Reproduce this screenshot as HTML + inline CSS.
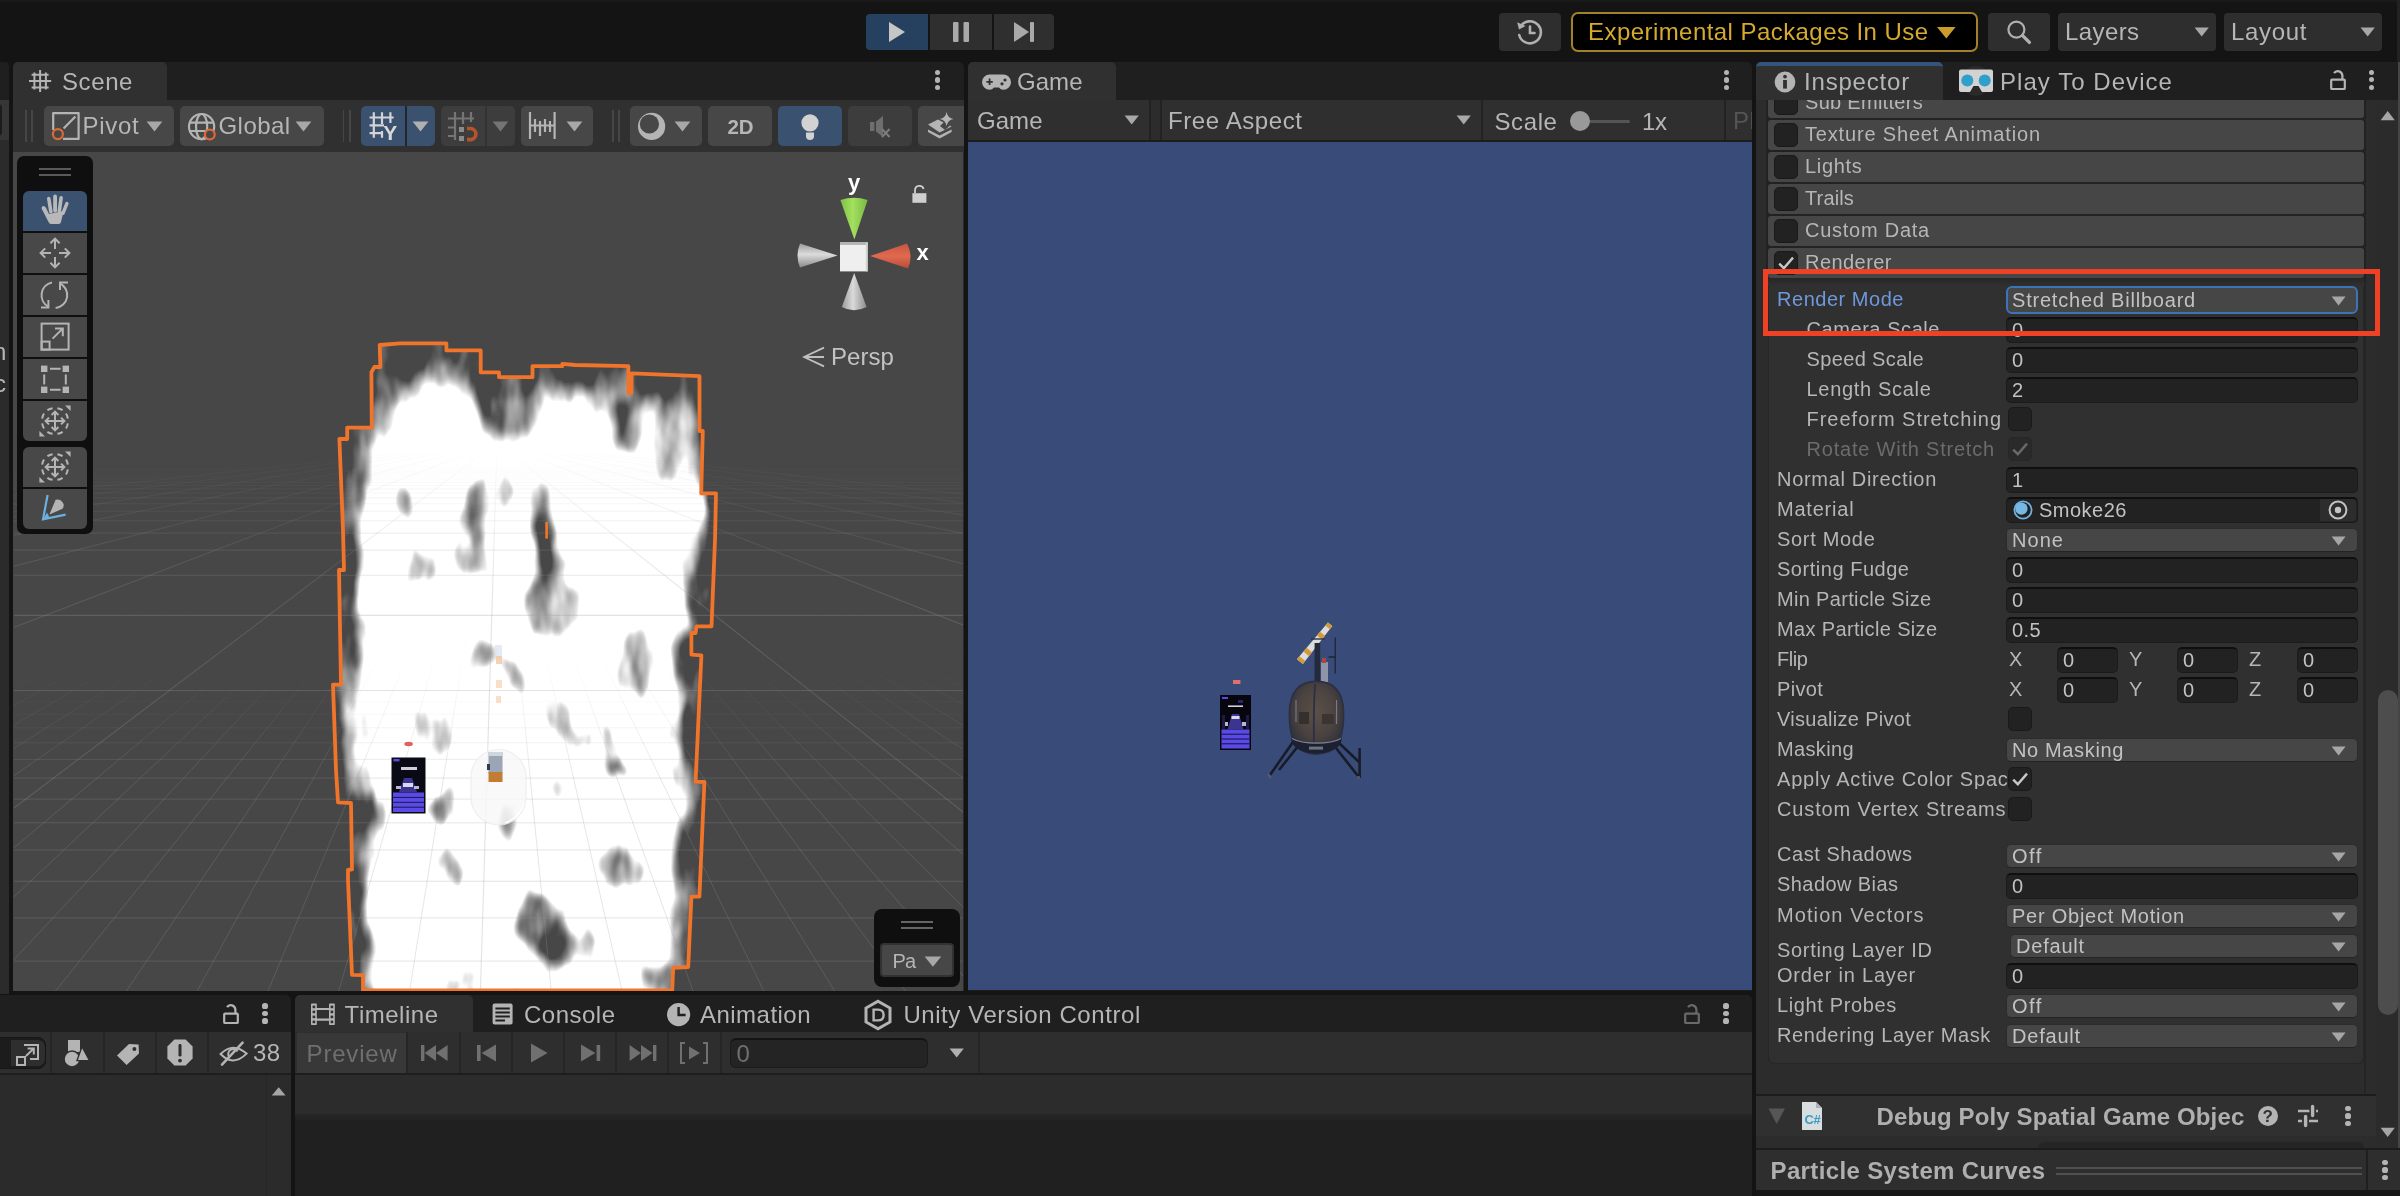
<!DOCTYPE html>
<html><head><meta charset="utf-8"><title>Unity Editor</title>
<style>
html,body{margin:0;padding:0;background:#141414;}
#root{position:relative;width:2400px;height:1196px;overflow:hidden;background:#141414;font-family:"Liberation Sans",sans-serif;}
#root div,#root span,#root svg{position:absolute;box-sizing:border-box;}
#root span{white-space:pre;}
#root{will-change:transform;}
</style></head><body><div id="root">
<div style="left:0px;top:0px;width:2400px;height:62px;background:#141414;"></div>
<div style="left:0px;top:0px;width:2400px;height:3px;background:linear-gradient(#1d1d1d,#141414);"></div>
<div style="left:2397px;top:0px;width:3px;height:62px;background:#222;"></div>
<div style="left:866px;top:14px;width:62px;height:36px;background:#26405f;border-radius:4px 0 0 4px;"></div>
<div style="left:930px;top:14px;width:62px;height:36px;background:#2f2f2f;"></div>
<div style="left:994px;top:14px;width:60px;height:36px;background:#2f2f2f;border-radius:0 4px 4px 0;"></div>
<svg style="left:866px;top:14px;" width="62" height="36" viewBox="0 0 62 36"><path d="M23 8 L39 18 L23 28 Z" fill="#c6c6c6"/></svg>
<svg style="left:930px;top:14px;" width="62" height="36" viewBox="0 0 62 36"><rect x="23" y="8" width="5.5" height="20" rx="1" fill="#a9a9a9"/><rect x="33.5" y="8" width="5.5" height="20" rx="1" fill="#a9a9a9"/></svg>
<svg style="left:994px;top:14px;" width="60" height="36" viewBox="0 0 60 36"><path d="M20 8 L35 18 L20 28 Z" fill="#a9a9a9"/><rect x="36" y="8" width="4" height="20" rx="1" fill="#a9a9a9"/></svg>
<div style="left:1499px;top:13px;width:62px;height:38px;background:#2e2e2e;border-radius:4px;"></div>
<svg style="left:1514px;top:16px;" width="32" height="32" viewBox="0 0 32 32"><g fill="none" stroke="#b0b0b0" stroke-width="2.6" stroke-linecap="round"><path d="M6.5 10.5 A11 11 0 1 1 5.2 19"/><path d="M16 10.5 V17 H20.5"/></g><path d="M3.2 6.2 L5 13.6 L11.6 10 Z" fill="#b0b0b0"/></svg>
<div style="left:1571px;top:12px;width:407px;height:40px;background:#000;border:2px solid #a3812c;border-radius:7px;"></div>
<span id="t0" style="left:1588px;top:20.28px;font-size:24px;line-height:24px;color:#d6a92f;font-weight:400;letter-spacing:0.44px;">Experimental Packages In Use</span>
<svg style="left:1936px;top:26px;" width="22" height="14" viewBox="0 0 22 14"><path d="M1 1 H19.6 L10.3 12.6 Z" fill="#c99c2c"/></svg>
<div style="left:1988px;top:13px;width:62px;height:38px;background:#2e2e2e;border-radius:4px;"></div>
<svg style="left:2004px;top:18px;" width="32" height="30" viewBox="0 0 32 30"><circle cx="12.4" cy="11.6" r="8" fill="none" stroke="#b0b0b0" stroke-width="2.2"/><path d="M18.6 17.6 L25.4 24.4" stroke="#b0b0b0" stroke-width="3.4" stroke-linecap="round"/></svg>
<div style="left:2058px;top:13px;width:158px;height:38px;background:#2e2e2e;border-radius:4px;"></div>
<div style="left:2224px;top:13px;width:158px;height:38px;background:#2e2e2e;border-radius:4px;"></div>
<span id="t1" style="left:2065px;top:20.08px;font-size:24px;line-height:24px;color:#b6b6b6;font-weight:400;letter-spacing:0.41px;">Layers</span>
<span id="t2" style="left:2231px;top:20.08px;font-size:24px;line-height:24px;color:#b6b6b6;font-weight:400;letter-spacing:0.66px;">Layout</span>
<svg style="left:2194px;top:27px;" width="16" height="11" viewBox="0 0 16 11"><path d="M0.6 0.6 H14.8 L7.7 9.6 Z" fill="#a8a8a8"/></svg>
<svg style="left:2360px;top:27px;" width="16" height="11" viewBox="0 0 16 11"><path d="M0.6 0.6 H14.8 L7.7 9.6 Z" fill="#a8a8a8"/></svg>
<div style="left:0px;top:62px;width:8.5px;height:932px;background:#1f1f1f;border-radius:0 4px 0 0;"></div>
<div style="left:0px;top:100px;width:8.5px;height:40px;background:#363636;"></div>
<div style="left:-6px;top:104px;width:8px;height:32px;background:#1c1c1c;border-radius:6px;"></div>
<div style="left:0px;top:140px;width:8.5px;height:854px;background:#2b2b2b;"></div>
<span id="t3" style="left:0px;top:339.68px;font-size:24px;line-height:24px;color:#b6b6b6;font-weight:400;letter-spacing:0.53px;margin-left:-7px;">n</span>
<span id="t4" style="left:0px;top:371.68px;font-size:24px;line-height:24px;color:#b6b6b6;font-weight:400;letter-spacing:0.53px;margin-left:-6px;">c</span>
<div style="left:13px;top:62px;width:951px;height:38px;background:#1f1f1f;border-radius:5px 5px 0 0;"></div>
<div style="left:13px;top:62px;width:154px;height:39px;background:#303030;border-radius:5px 5px 0 0;"></div>
<svg style="left:28px;top:69px;" width="24" height="24" viewBox="0 0 24 24"><g stroke="#b4b4b4" stroke-width="2" fill="none"><path d="M12.1 1 V23 M6.4 3.6 V20.4 M17.9 3.6 V20.4 M1 12 H23.2 M3.6 5.8 H20.6 M3.6 18.6 H20.6"/></g></svg>
<span id="t5" style="left:62px;top:69.88px;font-size:24px;line-height:24px;color:#b6b6b6;font-weight:400;letter-spacing:0.59px;">Scene</span>
<div style="left:934.5px;top:69.9px;width:5.2px;height:5.2px;background:#b4b4b4;border-radius:50%;"></div>
<div style="left:934.5px;top:77.4px;width:5.2px;height:5.2px;background:#b4b4b4;border-radius:50%;"></div>
<div style="left:934.5px;top:84.9px;width:5.2px;height:5.2px;background:#b4b4b4;border-radius:50%;"></div>
<div style="left:13px;top:100px;width:951px;height:52px;background:#303030;"></div>
<div style="left:968px;top:62px;width:784px;height:38px;background:#1f1f1f;border-radius:5px 5px 0 0;"></div>
<div style="left:968px;top:62px;width:148px;height:39px;background:#303030;border-radius:5px 5px 0 0;"></div>
<span id="t6" style="left:1017px;top:69.88px;font-size:24px;line-height:24px;color:#b6b6b6;font-weight:400;letter-spacing:0.04px;">Game</span>
<div style="left:1723.5px;top:69.9px;width:5.2px;height:5.2px;background:#b4b4b4;border-radius:50%;"></div>
<div style="left:1723.5px;top:77.4px;width:5.2px;height:5.2px;background:#b4b4b4;border-radius:50%;"></div>
<div style="left:1723.5px;top:84.9px;width:5.2px;height:5.2px;background:#b4b4b4;border-radius:50%;"></div>
<div style="left:968px;top:100px;width:784px;height:42px;background:#2f2f2f;"></div>
<div style="left:1756px;top:62px;width:644px;height:38px;background:#1f1f1f;border-radius:5px 0 0 0;"></div>
<div style="left:1756px;top:62px;width:187px;height:39px;background:#303030;border-radius:5px 5px 0 0;border-top:4px solid #34547c;"></div>
<span id="t7" style="left:1804px;top:70.08px;font-size:24px;line-height:24px;color:#b6b6b6;font-weight:400;letter-spacing:0.81px;">Inspector</span>
<span id="t8" style="left:2000px;top:70.08px;font-size:24px;line-height:24px;color:#b6b6b6;font-weight:400;letter-spacing:1.05px;">Play To Device</span>
<div style="left:2369.2px;top:69.7px;width:5.2px;height:5.2px;background:#b4b4b4;border-radius:50%;"></div>
<div style="left:2369.2px;top:77.30000000000001px;width:5.2px;height:5.2px;background:#b4b4b4;border-radius:50%;"></div>
<div style="left:2369.2px;top:84.9px;width:5.2px;height:5.2px;background:#b4b4b4;border-radius:50%;"></div>
<div style="left:0px;top:995px;width:291px;height:37px;background:#1f1f1f;border-radius:0 5px 0 0;"></div>
<div style="left:295px;top:995px;width:1457px;height:37px;background:#1f1f1f;border-radius:5px 5px 0 0;"></div>
<div style="left:295px;top:995px;width:178px;height:38px;background:#303030;border-radius:5px 5px 0 0;"></div>
<div style="left:25px;top:110px;width:1.8px;height:32px;background:#464646;"></div>
<div style="left:31.2px;top:110px;width:1.8px;height:32px;background:#464646;"></div>
<div style="left:342.6px;top:110px;width:1.8px;height:32px;background:#464646;"></div>
<div style="left:348.8px;top:110px;width:1.8px;height:32px;background:#464646;"></div>
<div style="left:611.8px;top:110px;width:1.8px;height:32px;background:#464646;"></div>
<div style="left:618.0px;top:110px;width:1.8px;height:32px;background:#464646;"></div>
<div style="left:44px;top:106px;width:130px;height:40px;background:#474747;border-radius:5px;"></div>
<div style="left:180px;top:106px;width:144px;height:40px;background:#474747;border-radius:5px;"></div>
<svg style="left:49px;top:110px;" width="34" height="34" viewBox="0 0 34 34"><path d="M4.2 20 V3.1 H29.6 V28.9 H14" fill="none" stroke="#b4b4b4" stroke-width="2.2" stroke-linejoin="round"/><path d="M14.6 18.4 L26.4 6.4" stroke="#b4b4b4" stroke-width="2.2"/><circle cx="8.9" cy="24.1" r="5" fill="#474747" stroke="#dd6a35" stroke-width="2.2"/></svg>
<span id="t9" style="left:82.5px;top:114.28px;font-size:24px;line-height:24px;color:#b6b6b6;font-weight:400;letter-spacing:0.73px;">Pivot</span>
<svg style="left:146px;top:121px;" width="18" height="12" viewBox="0 0 18 12"><path d="M0.6 0.6 H16.4 L8.5 10.6 Z" fill="#a8a8a8"/></svg>
<svg style="left:186px;top:110px;" width="38" height="34" viewBox="0 0 38 34"><g fill="none" stroke="#b4b4b4" stroke-width="2.2"><circle cx="15.6" cy="16.6" r="12.6"/><ellipse cx="15.6" cy="16.6" rx="5.6" ry="12.6"/><path d="M3.5 12.6 H27.6 M3.5 21 H20"/></g><circle cx="23.8" cy="24.6" r="4.9" fill="#474747" stroke="#dd6a35" stroke-width="2.2"/></svg>
<span id="t10" style="left:218.5px;top:114.28px;font-size:24px;line-height:24px;color:#b6b6b6;font-weight:400;letter-spacing:0.44px;">Global</span>
<svg style="left:295px;top:121px;" width="18" height="12" viewBox="0 0 18 12"><path d="M0.6 0.6 H16.4 L8.5 10.6 Z" fill="#a8a8a8"/></svg>
<div style="left:361px;top:106px;width:74px;height:40px;background:#3a5170;border-radius:5px;"></div>
<div style="left:404.6px;top:106px;width:2px;height:40px;background:#23272d;"></div>
<svg style="left:366px;top:110px;" width="36" height="34" viewBox="0 0 36 34"><g stroke="#d4d4d4" stroke-width="2.2" fill="none"><path d="M7.8 2.3 V27.8 M16 2.3 V14 M16 21 V27.8 M24.4 2.3 V13 M3.6 7.5 H27.7 M3.6 15.3 H18 M3.6 23.2 H16"/></g></svg>
<span id="t11" style="left:383.2px;top:121.82px;font-size:21px;line-height:21px;color:#d8d8d8;font-weight:700;letter-spacing:0.46px;">Y</span>
<svg style="left:412px;top:121px;" width="18" height="12" viewBox="0 0 18 12"><path d="M0.6 0.6 H16.4 L8.5 10.6 Z" fill="#b0b0b0"/></svg>
<div style="left:441px;top:106px;width:74px;height:40px;background:#3d3d3d;border-radius:5px;"></div>
<div style="left:484.6px;top:106px;width:2px;height:40px;background:#333;"></div>
<svg style="left:446px;top:110px;" width="38" height="34" viewBox="0 0 38 34"><g stroke="#757575" stroke-width="2.2" fill="none"><path d="M9 2 V30 M17 2 V14 M25 2 V12 M2 8.5 H28 M2 17.5 H10 M2 26 H10"/></g><rect x="13" y="17" width="5" height="5" fill="#8a8a8a"/><rect x="13" y="26" width="5" height="5" fill="#8a8a8a"/><path d="M21 18.5 H25 A5.6 5.6 0 0 1 25 29.6 H21" fill="none" stroke="#b5532d" stroke-width="3.6"/></svg>
<svg style="left:492px;top:121px;" width="18" height="12" viewBox="0 0 18 12"><path d="M0.6 0.6 H16.4 L8.5 10.6 Z" fill="#747474"/></svg>
<div style="left:521px;top:106px;width:72px;height:40px;background:#474747;border-radius:5px;"></div>
<svg style="left:527px;top:110px;" width="30" height="34" viewBox="0 0 30 34"><g stroke="#b4b4b4" stroke-width="2.2"><path d="M3 2 V29 M27.6 2 V29 M3 15.5 H27.6 M8 9 V22 M13 11 V26 M18 9 V22 M23 11 V22"/></g></svg>
<svg style="left:566px;top:121px;" width="18" height="12" viewBox="0 0 18 12"><path d="M0.6 0.6 H16.4 L8.5 10.6 Z" fill="#a8a8a8"/></svg>
<div style="left:630px;top:106px;width:72px;height:40px;background:#474747;border-radius:5px;"></div>
<svg style="left:636px;top:110px;" width="32" height="34" viewBox="0 0 32 34"><defs><mask id="cres"><rect width="32" height="34" fill="#fff"/><circle cx="13.4" cy="14" r="9.6" fill="#000"/></mask></defs><circle cx="15.6" cy="16.4" r="13.6" fill="#b4b4b4" mask="url(#cres)"/></svg>
<svg style="left:674px;top:121px;" width="18" height="12" viewBox="0 0 18 12"><path d="M0.6 0.6 H16.4 L8.5 10.6 Z" fill="#a8a8a8"/></svg>
<div style="left:708px;top:106px;width:64px;height:40px;background:#474747;border-radius:5px;"></div>
<span id="t12" style="left:727.6px;top:116.85px;font-size:20.5px;line-height:20.5px;color:#b6b6b6;font-weight:700;letter-spacing:-0.31px;">2D</span>
<div style="left:778px;top:106px;width:64px;height:40px;background:#3a5170;border-radius:5px;"></div>
<svg style="left:796px;top:112px;" width="28" height="30" viewBox="0 0 28 30"><circle cx="14" cy="10.8" r="8.6" fill="#d2d2d2"/><path d="M10 20.6 H18 V24 A4 4 0 0 1 10 24 Z" fill="#d2d2d2"/></svg>
<div style="left:848px;top:106px;width:64px;height:40px;background:#3d3d3d;border-radius:5px;"></div>
<svg style="left:866px;top:113px;" width="30" height="28" viewBox="0 0 30 28"><rect x="4" y="9" width="4.4" height="9" fill="#6e6e6e"/><path d="M10 8.6 L17 3 V24 L10 18.4 Z" fill="#6e6e6e"/><path d="M16 16 L23.6 24 M23.6 16 L16 24" stroke="#7c7c7c" stroke-width="2"/></svg>
<div style="left:918px;top:106px;width:46px;height:40px;background:#474747;border-radius:5px 0 0 5px;"></div>
<svg style="left:926px;top:111px;" width="30" height="30" viewBox="0 0 30 30"><path d="M2 13.6 L12 8.6 L17.6 11.4 L14 15 L19 19 L24 14.6 L25.6 15.4 L13.6 21.6 Z" fill="#b4b4b4"/><path d="M2 18.6 L13.6 24.6 L25.6 18.6 V21 L13.6 27.6 L2 21 Z" fill="#b4b4b4"/><path d="M20.6 1 Q21.6 7 27.6 8 Q21.6 9 20.6 15 Q19.6 9 13.6 8 Q19.6 7 20.6 1 Z" fill="#b4b4b4"/></svg>
<svg style="left:13px;top:152px;" width="951" height="839" viewBox="13 152 951 839"><defs><mask id="sm" maskUnits="userSpaceOnUse" x="300" y="320" width="450" height="690"><g filter="url(#fs)"><rect x="280" y="300" width="500" height="720" fill="#000"/><path d="M388 378 L440 368 L474 378 L486 398 L530 400 L540 388 L600 384 L624 390 L634 404 L688 400 L690 440 L696 500 L697 620 L683 640 L687 780 L689 800 L685 890 L677 960 L664 996 L372 996 L365 960 L363 880 L365 806 L353 796 L351 690 L357 680 L357 576 L359 452 L378 442 Z" fill="#6a6a6a" filter="url(#fbA)"/><path d="M387 434 L391 408 L404 395 L440 389 L463 395 L477 409 L485 432 L497 446 L513 430 L522 442 L531 436 L538 428 L544 412 L556 403 L580 400 L601 404 L613 414 L617 434 L621 450 L629 458 L641 448 L650 430 L662 414 L686 410 L695 428 L692 480 L697 502 L696 620 L683 640 L687 780 L692 792 L685 890 L677 960 L662 996 L372 996 L365 960 L361 880 L365 800 L350 790 L351 690 L357 680 L353 580 L355 484 L363 458 L376 442 Z" fill="#fff" filter="url(#fbA)"/><g fill="#000" filter="url(#fbB)"><ellipse cx="509" cy="410" rx="20" ry="14" opacity="0.55"/><ellipse cx="476" cy="514" rx="13" ry="32" opacity="0.9"/><ellipse cx="550" cy="526" rx="17" ry="34" opacity="0.95"/><ellipse cx="546" cy="492" rx="13" ry="16" opacity="0.6"/><ellipse cx="504" cy="494" rx="9" ry="22" opacity="0.6"/><ellipse cx="409" cy="506" rx="12" ry="18" opacity="0.65"/><ellipse cx="624" cy="420" rx="9" ry="30" opacity="0.95"/><ellipse cx="672" cy="440" rx="20" ry="46" opacity="0.55"/><ellipse cx="551" cy="566" rx="16" ry="22" opacity="0.9"/><ellipse cx="548" cy="612" rx="28" ry="28" opacity="0.65"/><ellipse cx="469" cy="560" rx="11" ry="20" opacity="0.7"/><ellipse cx="414" cy="566" rx="16" ry="22" opacity="0.65"/><ellipse cx="481" cy="654" rx="15" ry="18" opacity="0.65"/><ellipse cx="510" cy="678" rx="10" ry="24" opacity="0.75"/><ellipse cx="635" cy="657" rx="18" ry="38" opacity="0.6"/><ellipse cx="558" cy="716" rx="17" ry="20" opacity="0.6"/><ellipse cx="609" cy="744" rx="12" ry="26" opacity="0.75"/><ellipse cx="435" cy="728" rx="17" ry="24" opacity="0.6"/><ellipse cx="396" cy="697" rx="10" ry="15" opacity="0.55"/><ellipse cx="577" cy="740" rx="12" ry="12" opacity="0.55"/><ellipse cx="445" cy="812" rx="13" ry="19" opacity="0.85"/><ellipse cx="445" cy="870" rx="13" ry="22" opacity="0.75"/><ellipse cx="510" cy="821" rx="13" ry="27" opacity="0.75"/><ellipse cx="612" cy="773" rx="15" ry="13" opacity="1.0"/><ellipse cx="560" cy="782" rx="7" ry="12" opacity="0.6"/><ellipse cx="619" cy="868" rx="26" ry="22" opacity="0.7"/><ellipse cx="538" cy="925" rx="27" ry="37" opacity="0.92"/><ellipse cx="557" cy="950" rx="18" ry="20" opacity="0.85"/><ellipse cx="457" cy="982" rx="17" ry="10" opacity="0.6"/><ellipse cx="656" cy="977" rx="17" ry="15" opacity="0.8"/><ellipse cx="587" cy="949" rx="10" ry="14" opacity="0.6"/><ellipse cx="416" cy="894" rx="6" ry="12" opacity="0.6"/></g><g fill="#000" filter="url(#fbC)"><ellipse cx="348" cy="475" rx="14" ry="45" opacity="1"/><ellipse cx="347" cy="560" rx="13" ry="52" opacity="1"/><ellipse cx="344" cy="640" rx="14" ry="40" opacity="1"/><ellipse cx="343" cy="705" rx="17" ry="50" opacity="1"/><ellipse cx="346" cy="770" rx="14" ry="34" opacity="1"/><ellipse cx="358" cy="815" rx="20" ry="24" opacity="1"/><ellipse cx="356" cy="885" rx="12" ry="46" opacity="0.95"/><ellipse cx="365" cy="952" rx="12" ry="36" opacity="0.95"/><ellipse cx="700" cy="450" rx="10" ry="50" opacity="0.95"/><ellipse cx="708" cy="560" rx="14" ry="70" opacity="1"/><ellipse cx="690" cy="665" rx="22" ry="34" opacity="1"/><ellipse cx="692" cy="750" rx="15" ry="48" opacity="1"/><ellipse cx="691" cy="850" rx="16" ry="48" opacity="1"/><ellipse cx="681" cy="940" rx="16" ry="38" opacity="1"/></g></g></mask><filter id="fs" filterUnits="userSpaceOnUse" x="300" y="320" width="450" height="690" color-interpolation-filters="sRGB"><feTurbulence type="fractalNoise" baseFrequency="0.028 0.011" numOctaves="3" seed="7" result="n1"/><feDisplacementMap in="SourceGraphic" in2="n1" scale="34" xChannelSelector="R" yChannelSelector="G" result="d"/><feGaussianBlur in="d" stdDeviation="2" result="b"/><feTurbulence type="fractalNoise" baseFrequency="0.04 0.015" numOctaves="3" seed="31" result="n2"/><feColorMatrix in="n2" type="matrix" values="1 0 0 0 0  1 0 0 0 0  1 0 0 0 0  0 0 0 0 1" result="n2g"/><feComposite in="b" in2="n2g" operator="arithmetic" k1="0" k2="1.5" k3="-1.2" k4="0.55" result="c"/><feColorMatrix in="c" type="matrix" values="1 0 0 0 0  0 1 0 0 0  0 0 1 0 0  0 0 0 0 1"/></filter><filter id="fbA" filterUnits="userSpaceOnUse" x="300" y="320" width="450" height="690" color-interpolation-filters="sRGB"><feGaussianBlur stdDeviation="7.5"/></filter><filter id="fbC" filterUnits="userSpaceOnUse" x="300" y="320" width="450" height="690" color-interpolation-filters="sRGB"><feGaussianBlur stdDeviation="9"/></filter><filter id="fbB" filterUnits="userSpaceOnUse" x="300" y="320" width="450" height="690" color-interpolation-filters="sRGB"><feGaussianBlur stdDeviation="6"/></filter><filter id="fo"><feGaussianBlur stdDeviation="0.5"/></filter><linearGradient id="gfade" x1="0" y1="444" x2="0" y2="991" gradientUnits="userSpaceOnUse"><stop offset="0" stop-color="#fff" stop-opacity="0"/><stop offset="0.08" stop-color="#fff" stop-opacity="0.3"/><stop offset="0.3" stop-color="#fff" stop-opacity="1"/><stop offset="1" stop-color="#fff" stop-opacity="1"/></linearGradient><linearGradient id="gfade2" x1="0" y1="444" x2="0" y2="991" gradientUnits="userSpaceOnUse"><stop offset="0" stop-color="#fff" stop-opacity="0"/><stop offset="0.4" stop-color="#fff" stop-opacity="0.06"/><stop offset="0.62" stop-color="#fff" stop-opacity="1"/><stop offset="1" stop-color="#fff" stop-opacity="1"/></linearGradient><mask id="gm" maskUnits="userSpaceOnUse" x="14" y="152" width="950" height="839"><rect x="14" y="444" width="950" height="547" fill="url(#gfade)"/></mask><mask id="gm2" maskUnits="userSpaceOnUse" x="14" y="152" width="950" height="839"><rect x="14" y="444" width="950" height="547" fill="url(#gfade2)"/></mask><clipPath id="oc"><path id="ocp" d="M379.7 345 L400 343.4 L446.4 343.4 L446.4 350.4 L480.7 350.4 L480.7 372.3 L499 372.3 L499 377.2 L532.5 377.2 L532.5 366.2 L562.3 366.2 L562.3 363.8 L575 365 L628.4 366.2 L628.4 393 L631.4 393 L631.7 373.4 L699.5 376.2 L699.5 431 L702.8 431 L701.2 493.4 L716 493.4 L715 540 L711.5 626.4 L696.4 626.4 L695.6 633 L691.4 633 L691.4 654.6 L701.4 655.4 L695.6 781.6 L704.4 782 L699.4 896.6 L691.4 896.6 L688.2 967 L673.2 967.8 L672.2 990.4 L363 990.4 L363 975.2 L352 974.8 L348 880 L348 870 L352 869.4 L351 803 L338 802.4 L336 770 L333 684.6 L341 684.6 L339 570 L344 570 L343 530 L339.4 439 L347.2 439 L347.2 427.6 L371.8 427.6 L371.4 372.2 L374.4 367 L380.4 367 Z"/></clipPath></defs><rect x="13" y="152" width="951" height="839" fill="#474747"/><g clip-path="url(#oc)"><rect x="300" y="320" width="450" height="690" fill="#fff" mask="url(#sm)"/></g><g mask="url(#gm)"><path d="M13 881.3 H964" stroke="#9a9a9a" stroke-opacity="0.28" stroke-width="1.1"/><path d="M13 690.5 H964" stroke="#9a9a9a" stroke-opacity="0.28" stroke-width="1.1"/><path d="M13 615.4 H964" stroke="#9a9a9a" stroke-opacity="0.28" stroke-width="1.1"/><path d="M13 575.2 H964" stroke="#9a9a9a" stroke-opacity="0.28" stroke-width="1.1"/><path d="M13 550.1 H964" stroke="#9a9a9a" stroke-opacity="0.28" stroke-width="1.1"/><path d="M13 533.1 H964" stroke="#9a9a9a" stroke-opacity="0.28" stroke-width="1.1"/><path d="M13 520.7 H964" stroke="#9a9a9a" stroke-opacity="0.28" stroke-width="1.1"/><path d="M13 511.2 H964" stroke="#9a9a9a" stroke-opacity="0.28" stroke-width="1.1"/><path d="M13 503.8 H964" stroke="#9a9a9a" stroke-opacity="0.26" stroke-width="1.1"/><path d="M13 497.9 H964" stroke="#9a9a9a" stroke-opacity="0.25" stroke-width="1.1"/><path d="M13 493.0 H964" stroke="#9a9a9a" stroke-opacity="0.23" stroke-width="1.1"/><path d="M13 488.9 H964" stroke="#9a9a9a" stroke-opacity="0.22" stroke-width="1.1"/><path d="M13 485.4 H964" stroke="#9a9a9a" stroke-opacity="0.20" stroke-width="1.1"/><path d="M13 482.4 H964" stroke="#9a9a9a" stroke-opacity="0.19" stroke-width="1.1"/><path d="M13 479.8 H964" stroke="#9a9a9a" stroke-opacity="0.17" stroke-width="1.1"/><path d="M13 477.5 H964" stroke="#9a9a9a" stroke-opacity="0.16" stroke-width="1.1"/><path d="M13 475.5 H964" stroke="#9a9a9a" stroke-opacity="0.14" stroke-width="1.1"/><path d="M13 473.7 H964" stroke="#9a9a9a" stroke-opacity="0.13" stroke-width="1.1"/><path d="M13 472.1 H964" stroke="#9a9a9a" stroke-opacity="0.11" stroke-width="1.1"/><path d="M13 470.6 H964" stroke="#9a9a9a" stroke-opacity="0.10" stroke-width="1.1"/><path d="M13 469.3 H964" stroke="#9a9a9a" stroke-opacity="0.08" stroke-width="1.1"/><path d="M13 468.1 H964" stroke="#9a9a9a" stroke-opacity="0.07" stroke-width="1.1"/><path d="M13 467.0 H964" stroke="#9a9a9a" stroke-opacity="0.05" stroke-width="1.1"/><path d="M13 466.0 H964" stroke="#9a9a9a" stroke-opacity="0.04" stroke-width="1.1"/><path d="M13 465.0 H964" stroke="#9a9a9a" stroke-opacity="0.02" stroke-width="1.1"/><path d="M13 464.2 H964" stroke="#9a9a9a" stroke-opacity="0.01" stroke-width="1.1"/><path d="M13 463.4 H964" stroke="#9a9a9a" stroke-opacity="0.00" stroke-width="1.1"/><path d="M397.7 453.4 L-4518.2 995.5" stroke="#9a9a9a" stroke-opacity="0.28" stroke-width="1.1"/><path d="M411.8 453.4 L-3804.1 995.5" stroke="#9a9a9a" stroke-opacity="0.28" stroke-width="1.1"/><path d="M426.0 453.4 L-3090.0 995.5" stroke="#9a9a9a" stroke-opacity="0.28" stroke-width="1.1"/><path d="M440.1 453.4 L-2375.9 995.5" stroke="#9a9a9a" stroke-opacity="0.28" stroke-width="1.1"/><path d="M454.2 453.4 L-1661.9 995.5" stroke="#9a9a9a" stroke-opacity="0.28" stroke-width="1.1"/><path d="M468.4 453.4 L-947.8 995.5" stroke="#9a9a9a" stroke-opacity="0.28" stroke-width="1.1"/><path d="M482.5 453.4 L-233.7 995.5" stroke="#9a9a9a" stroke-opacity="0.28" stroke-width="1.1"/><path d="M496.7 453.4 L480.3 995.5" stroke="#9a9a9a" stroke-opacity="0.28" stroke-width="1.1"/><path d="M510.8 453.4 L1194.4 995.5" stroke="#9a9a9a" stroke-opacity="0.28" stroke-width="1.1"/><path d="M525.0 453.4 L1908.5 995.5" stroke="#9a9a9a" stroke-opacity="0.28" stroke-width="1.1"/><path d="M539.1 453.4 L2622.5 995.5" stroke="#9a9a9a" stroke-opacity="0.28" stroke-width="1.1"/><path d="M553.2 453.4 L3336.6 995.5" stroke="#9a9a9a" stroke-opacity="0.28" stroke-width="1.1"/><path d="M567.4 453.4 L4050.7 995.5" stroke="#9a9a9a" stroke-opacity="0.28" stroke-width="1.1"/><path d="M581.5 453.4 L4764.8 995.5" stroke="#9a9a9a" stroke-opacity="0.28" stroke-width="1.1"/><path d="M595.6 453.4 L5478.8 995.5" stroke="#9a9a9a" stroke-opacity="0.28" stroke-width="1.1"/></g><g mask="url(#gm2)"><path d="M13 961.1 H964" stroke="#9a9a9a" stroke-opacity="0.25" stroke-width="1"/><path d="M13 917.9 H964" stroke="#9a9a9a" stroke-opacity="0.25" stroke-width="1"/><path d="M13 850.0 H964" stroke="#9a9a9a" stroke-opacity="0.25" stroke-width="1"/><path d="M13 822.8 H964" stroke="#9a9a9a" stroke-opacity="0.25" stroke-width="1"/><path d="M13 799.1 H964" stroke="#9a9a9a" stroke-opacity="0.25" stroke-width="1"/><path d="M13 778.1 H964" stroke="#9a9a9a" stroke-opacity="0.25" stroke-width="1"/><path d="M13 759.4 H964" stroke="#9a9a9a" stroke-opacity="0.23" stroke-width="1"/><path d="M13 742.8 H964" stroke="#9a9a9a" stroke-opacity="0.20" stroke-width="1"/><path d="M13 727.8 H964" stroke="#9a9a9a" stroke-opacity="0.17" stroke-width="1"/><path d="M13 714.2 H964" stroke="#9a9a9a" stroke-opacity="0.15" stroke-width="1"/><path d="M13 701.8 H964" stroke="#9a9a9a" stroke-opacity="0.12" stroke-width="1"/><path d="M13 680.2 H964" stroke="#9a9a9a" stroke-opacity="0.07" stroke-width="1"/><path d="M13 670.7 H964" stroke="#9a9a9a" stroke-opacity="0.05" stroke-width="1"/><path d="M13 661.9 H964" stroke="#9a9a9a" stroke-opacity="0.05" stroke-width="1"/><path d="M13 653.8 H964" stroke="#9a9a9a" stroke-opacity="0.05" stroke-width="1"/><path d="M13 646.2 H964" stroke="#9a9a9a" stroke-opacity="0.05" stroke-width="1"/><path d="M13 639.2 H964" stroke="#9a9a9a" stroke-opacity="0.05" stroke-width="1"/><path d="M13 632.7 H964" stroke="#9a9a9a" stroke-opacity="0.05" stroke-width="1"/><path d="M13 626.5 H964" stroke="#9a9a9a" stroke-opacity="0.05" stroke-width="1"/><path d="M13 620.8 H964" stroke="#9a9a9a" stroke-opacity="0.05" stroke-width="1"/><path d="M13 610.3 H964" stroke="#9a9a9a" stroke-opacity="0.05" stroke-width="1"/><path d="M13 605.5 H964" stroke="#9a9a9a" stroke-opacity="0.05" stroke-width="1"/><path d="M13 601.0 H964" stroke="#9a9a9a" stroke-opacity="0.05" stroke-width="1"/><path d="M13 596.7 H964" stroke="#9a9a9a" stroke-opacity="0.05" stroke-width="1"/><path d="M13 592.6 H964" stroke="#9a9a9a" stroke-opacity="0.05" stroke-width="1"/><path d="M13 588.8 H964" stroke="#9a9a9a" stroke-opacity="0.05" stroke-width="1"/><path d="M13 585.1 H964" stroke="#9a9a9a" stroke-opacity="0.05" stroke-width="1"/><path d="M-971.4 606.8 L-4446.7 995.5" stroke="#9a9a9a" stroke-opacity="0.25" stroke-width="1"/><path d="M-950.2 606.8 L-4375.3 995.5" stroke="#9a9a9a" stroke-opacity="0.25" stroke-width="1"/><path d="M-929.0 606.8 L-4303.9 995.5" stroke="#9a9a9a" stroke-opacity="0.25" stroke-width="1"/><path d="M-907.8 606.8 L-4232.5 995.5" stroke="#9a9a9a" stroke-opacity="0.25" stroke-width="1"/><path d="M-886.6 606.8 L-4161.1 995.5" stroke="#9a9a9a" stroke-opacity="0.25" stroke-width="1"/><path d="M-865.4 606.8 L-4089.7 995.5" stroke="#9a9a9a" stroke-opacity="0.25" stroke-width="1"/><path d="M-844.2 606.8 L-4018.3 995.5" stroke="#9a9a9a" stroke-opacity="0.25" stroke-width="1"/><path d="M-823.0 606.8 L-3946.9 995.5" stroke="#9a9a9a" stroke-opacity="0.25" stroke-width="1"/><path d="M-801.8 606.8 L-3875.5 995.5" stroke="#9a9a9a" stroke-opacity="0.25" stroke-width="1"/><path d="M-759.3 606.8 L-3732.7 995.5" stroke="#9a9a9a" stroke-opacity="0.25" stroke-width="1"/><path d="M-738.1 606.8 L-3661.3 995.5" stroke="#9a9a9a" stroke-opacity="0.25" stroke-width="1"/><path d="M-716.9 606.8 L-3589.9 995.5" stroke="#9a9a9a" stroke-opacity="0.25" stroke-width="1"/><path d="M-695.7 606.8 L-3518.5 995.5" stroke="#9a9a9a" stroke-opacity="0.25" stroke-width="1"/><path d="M-674.5 606.8 L-3447.1 995.5" stroke="#9a9a9a" stroke-opacity="0.25" stroke-width="1"/><path d="M-653.3 606.8 L-3375.6 995.5" stroke="#9a9a9a" stroke-opacity="0.25" stroke-width="1"/><path d="M-632.1 606.8 L-3304.2 995.5" stroke="#9a9a9a" stroke-opacity="0.25" stroke-width="1"/><path d="M-610.9 606.8 L-3232.8 995.5" stroke="#9a9a9a" stroke-opacity="0.25" stroke-width="1"/><path d="M-589.7 606.8 L-3161.4 995.5" stroke="#9a9a9a" stroke-opacity="0.25" stroke-width="1"/><path d="M-547.2 606.8 L-3018.6 995.5" stroke="#9a9a9a" stroke-opacity="0.25" stroke-width="1"/><path d="M-526.0 606.8 L-2947.2 995.5" stroke="#9a9a9a" stroke-opacity="0.25" stroke-width="1"/><path d="M-504.8 606.8 L-2875.8 995.5" stroke="#9a9a9a" stroke-opacity="0.25" stroke-width="1"/><path d="M-483.6 606.8 L-2804.4 995.5" stroke="#9a9a9a" stroke-opacity="0.25" stroke-width="1"/><path d="M-462.4 606.8 L-2733.0 995.5" stroke="#9a9a9a" stroke-opacity="0.25" stroke-width="1"/><path d="M-441.2 606.8 L-2661.6 995.5" stroke="#9a9a9a" stroke-opacity="0.25" stroke-width="1"/><path d="M-420.0 606.8 L-2590.2 995.5" stroke="#9a9a9a" stroke-opacity="0.25" stroke-width="1"/><path d="M-398.8 606.8 L-2518.8 995.5" stroke="#9a9a9a" stroke-opacity="0.25" stroke-width="1"/><path d="M-377.6 606.8 L-2447.4 995.5" stroke="#9a9a9a" stroke-opacity="0.25" stroke-width="1"/><path d="M-335.1 606.8 L-2304.5 995.5" stroke="#9a9a9a" stroke-opacity="0.25" stroke-width="1"/><path d="M-313.9 606.8 L-2233.1 995.5" stroke="#9a9a9a" stroke-opacity="0.25" stroke-width="1"/><path d="M-292.7 606.8 L-2161.7 995.5" stroke="#9a9a9a" stroke-opacity="0.25" stroke-width="1"/><path d="M-271.5 606.8 L-2090.3 995.5" stroke="#9a9a9a" stroke-opacity="0.25" stroke-width="1"/><path d="M-250.3 606.8 L-2018.9 995.5" stroke="#9a9a9a" stroke-opacity="0.25" stroke-width="1"/><path d="M-229.1 606.8 L-1947.5 995.5" stroke="#9a9a9a" stroke-opacity="0.25" stroke-width="1"/><path d="M-207.9 606.8 L-1876.1 995.5" stroke="#9a9a9a" stroke-opacity="0.25" stroke-width="1"/><path d="M-186.7 606.8 L-1804.7 995.5" stroke="#9a9a9a" stroke-opacity="0.25" stroke-width="1"/><path d="M-165.5 606.8 L-1733.3 995.5" stroke="#9a9a9a" stroke-opacity="0.25" stroke-width="1"/><path d="M-123.0 606.8 L-1590.5 995.5" stroke="#9a9a9a" stroke-opacity="0.25" stroke-width="1"/><path d="M-101.8 606.8 L-1519.1 995.5" stroke="#9a9a9a" stroke-opacity="0.25" stroke-width="1"/><path d="M-80.6 606.8 L-1447.7 995.5" stroke="#9a9a9a" stroke-opacity="0.25" stroke-width="1"/><path d="M-59.4 606.8 L-1376.2 995.5" stroke="#9a9a9a" stroke-opacity="0.25" stroke-width="1"/><path d="M-38.2 606.8 L-1304.8 995.5" stroke="#9a9a9a" stroke-opacity="0.25" stroke-width="1"/><path d="M-17.0 606.8 L-1233.4 995.5" stroke="#9a9a9a" stroke-opacity="0.25" stroke-width="1"/><path d="M4.2 606.8 L-1162.0 995.5" stroke="#9a9a9a" stroke-opacity="0.25" stroke-width="1"/><path d="M25.4 606.8 L-1090.6 995.5" stroke="#9a9a9a" stroke-opacity="0.25" stroke-width="1"/><path d="M46.6 606.8 L-1019.2 995.5" stroke="#9a9a9a" stroke-opacity="0.25" stroke-width="1"/><path d="M89.1 606.8 L-876.4 995.5" stroke="#9a9a9a" stroke-opacity="0.25" stroke-width="1"/><path d="M110.3 606.8 L-805.0 995.5" stroke="#9a9a9a" stroke-opacity="0.25" stroke-width="1"/><path d="M131.5 606.8 L-733.6 995.5" stroke="#9a9a9a" stroke-opacity="0.25" stroke-width="1"/><path d="M152.7 606.8 L-662.2 995.5" stroke="#9a9a9a" stroke-opacity="0.25" stroke-width="1"/><path d="M173.9 606.8 L-590.8 995.5" stroke="#9a9a9a" stroke-opacity="0.25" stroke-width="1"/><path d="M195.1 606.8 L-519.4 995.5" stroke="#9a9a9a" stroke-opacity="0.25" stroke-width="1"/><path d="M216.3 606.8 L-448.0 995.5" stroke="#9a9a9a" stroke-opacity="0.25" stroke-width="1"/><path d="M237.5 606.8 L-376.5 995.5" stroke="#9a9a9a" stroke-opacity="0.25" stroke-width="1"/><path d="M258.7 606.8 L-305.1 995.5" stroke="#9a9a9a" stroke-opacity="0.25" stroke-width="1"/><path d="M301.2 606.8 L-162.3 995.5" stroke="#9a9a9a" stroke-opacity="0.25" stroke-width="1"/><path d="M322.4 606.8 L-90.9 995.5" stroke="#9a9a9a" stroke-opacity="0.25" stroke-width="1"/><path d="M343.6 606.8 L-19.5 995.5" stroke="#9a9a9a" stroke-opacity="0.25" stroke-width="1"/><path d="M364.8 606.8 L51.9 995.5" stroke="#9a9a9a" stroke-opacity="0.25" stroke-width="1"/><path d="M386.0 606.8 L123.3 995.5" stroke="#9a9a9a" stroke-opacity="0.25" stroke-width="1"/><path d="M407.2 606.8 L194.7 995.5" stroke="#9a9a9a" stroke-opacity="0.25" stroke-width="1"/><path d="M428.4 606.8 L266.1 995.5" stroke="#9a9a9a" stroke-opacity="0.25" stroke-width="1"/><path d="M449.6 606.8 L337.5 995.5" stroke="#9a9a9a" stroke-opacity="0.25" stroke-width="1"/><path d="M470.8 606.8 L408.9 995.5" stroke="#9a9a9a" stroke-opacity="0.25" stroke-width="1"/><path d="M513.3 606.8 L551.7 995.5" stroke="#9a9a9a" stroke-opacity="0.25" stroke-width="1"/><path d="M534.5 606.8 L623.1 995.5" stroke="#9a9a9a" stroke-opacity="0.25" stroke-width="1"/><path d="M555.7 606.8 L694.6 995.5" stroke="#9a9a9a" stroke-opacity="0.25" stroke-width="1"/><path d="M576.9 606.8 L766.0 995.5" stroke="#9a9a9a" stroke-opacity="0.25" stroke-width="1"/><path d="M598.1 606.8 L837.4 995.5" stroke="#9a9a9a" stroke-opacity="0.25" stroke-width="1"/><path d="M619.3 606.8 L908.8 995.5" stroke="#9a9a9a" stroke-opacity="0.25" stroke-width="1"/><path d="M640.5 606.8 L980.2 995.5" stroke="#9a9a9a" stroke-opacity="0.25" stroke-width="1"/><path d="M661.7 606.8 L1051.6 995.5" stroke="#9a9a9a" stroke-opacity="0.25" stroke-width="1"/><path d="M682.9 606.8 L1123.0 995.5" stroke="#9a9a9a" stroke-opacity="0.25" stroke-width="1"/><path d="M725.4 606.8 L1265.8 995.5" stroke="#9a9a9a" stroke-opacity="0.25" stroke-width="1"/><path d="M746.6 606.8 L1337.2 995.5" stroke="#9a9a9a" stroke-opacity="0.25" stroke-width="1"/><path d="M767.8 606.8 L1408.6 995.5" stroke="#9a9a9a" stroke-opacity="0.25" stroke-width="1"/><path d="M789.0 606.8 L1480.0 995.5" stroke="#9a9a9a" stroke-opacity="0.25" stroke-width="1"/><path d="M810.2 606.8 L1551.4 995.5" stroke="#9a9a9a" stroke-opacity="0.25" stroke-width="1"/><path d="M831.4 606.8 L1622.8 995.5" stroke="#9a9a9a" stroke-opacity="0.25" stroke-width="1"/><path d="M852.6 606.8 L1694.3 995.5" stroke="#9a9a9a" stroke-opacity="0.25" stroke-width="1"/><path d="M873.8 606.8 L1765.7 995.5" stroke="#9a9a9a" stroke-opacity="0.25" stroke-width="1"/><path d="M895.0 606.8 L1837.1 995.5" stroke="#9a9a9a" stroke-opacity="0.25" stroke-width="1"/><path d="M937.5 606.8 L1979.9 995.5" stroke="#9a9a9a" stroke-opacity="0.25" stroke-width="1"/><path d="M958.7 606.8 L2051.3 995.5" stroke="#9a9a9a" stroke-opacity="0.25" stroke-width="1"/><path d="M979.9 606.8 L2122.7 995.5" stroke="#9a9a9a" stroke-opacity="0.25" stroke-width="1"/><path d="M1001.1 606.8 L2194.1 995.5" stroke="#9a9a9a" stroke-opacity="0.25" stroke-width="1"/><path d="M1022.3 606.8 L2265.5 995.5" stroke="#9a9a9a" stroke-opacity="0.25" stroke-width="1"/><path d="M1043.5 606.8 L2336.9 995.5" stroke="#9a9a9a" stroke-opacity="0.25" stroke-width="1"/><path d="M1064.7 606.8 L2408.3 995.5" stroke="#9a9a9a" stroke-opacity="0.25" stroke-width="1"/><path d="M1085.9 606.8 L2479.7 995.5" stroke="#9a9a9a" stroke-opacity="0.25" stroke-width="1"/><path d="M1107.1 606.8 L2551.1 995.5" stroke="#9a9a9a" stroke-opacity="0.25" stroke-width="1"/><path d="M1149.6 606.8 L2694.0 995.5" stroke="#9a9a9a" stroke-opacity="0.25" stroke-width="1"/><path d="M1170.8 606.8 L2765.4 995.5" stroke="#9a9a9a" stroke-opacity="0.25" stroke-width="1"/><path d="M1192.0 606.8 L2836.8 995.5" stroke="#9a9a9a" stroke-opacity="0.25" stroke-width="1"/><path d="M1213.2 606.8 L2908.2 995.5" stroke="#9a9a9a" stroke-opacity="0.25" stroke-width="1"/><path d="M1234.4 606.8 L2979.6 995.5" stroke="#9a9a9a" stroke-opacity="0.25" stroke-width="1"/><path d="M1255.6 606.8 L3051.0 995.5" stroke="#9a9a9a" stroke-opacity="0.25" stroke-width="1"/><path d="M1276.8 606.8 L3122.4 995.5" stroke="#9a9a9a" stroke-opacity="0.25" stroke-width="1"/><path d="M1298.0 606.8 L3193.8 995.5" stroke="#9a9a9a" stroke-opacity="0.25" stroke-width="1"/><path d="M1319.2 606.8 L3265.2 995.5" stroke="#9a9a9a" stroke-opacity="0.25" stroke-width="1"/><path d="M1361.7 606.8 L3408.0 995.5" stroke="#9a9a9a" stroke-opacity="0.25" stroke-width="1"/><path d="M1382.9 606.8 L3479.4 995.5" stroke="#9a9a9a" stroke-opacity="0.25" stroke-width="1"/><path d="M1404.1 606.8 L3550.8 995.5" stroke="#9a9a9a" stroke-opacity="0.25" stroke-width="1"/><path d="M1425.3 606.8 L3622.2 995.5" stroke="#9a9a9a" stroke-opacity="0.25" stroke-width="1"/><path d="M1446.5 606.8 L3693.7 995.5" stroke="#9a9a9a" stroke-opacity="0.25" stroke-width="1"/><path d="M1467.7 606.8 L3765.1 995.5" stroke="#9a9a9a" stroke-opacity="0.25" stroke-width="1"/><path d="M1488.9 606.8 L3836.5 995.5" stroke="#9a9a9a" stroke-opacity="0.25" stroke-width="1"/><path d="M1510.1 606.8 L3907.9 995.5" stroke="#9a9a9a" stroke-opacity="0.25" stroke-width="1"/><path d="M1531.3 606.8 L3979.3 995.5" stroke="#9a9a9a" stroke-opacity="0.25" stroke-width="1"/><path d="M1573.8 606.8 L4122.1 995.5" stroke="#9a9a9a" stroke-opacity="0.25" stroke-width="1"/><path d="M1595.0 606.8 L4193.5 995.5" stroke="#9a9a9a" stroke-opacity="0.25" stroke-width="1"/><path d="M1616.2 606.8 L4264.9 995.5" stroke="#9a9a9a" stroke-opacity="0.25" stroke-width="1"/><path d="M1637.4 606.8 L4336.3 995.5" stroke="#9a9a9a" stroke-opacity="0.25" stroke-width="1"/><path d="M1658.6 606.8 L4407.7 995.5" stroke="#9a9a9a" stroke-opacity="0.25" stroke-width="1"/><path d="M1679.8 606.8 L4479.1 995.5" stroke="#9a9a9a" stroke-opacity="0.25" stroke-width="1"/><path d="M1701.0 606.8 L4550.5 995.5" stroke="#9a9a9a" stroke-opacity="0.25" stroke-width="1"/><path d="M1722.2 606.8 L4621.9 995.5" stroke="#9a9a9a" stroke-opacity="0.25" stroke-width="1"/><path d="M1743.4 606.8 L4693.3 995.5" stroke="#9a9a9a" stroke-opacity="0.25" stroke-width="1"/><path d="M1785.9 606.8 L4836.2 995.5" stroke="#9a9a9a" stroke-opacity="0.25" stroke-width="1"/><path d="M1807.1 606.8 L4907.6 995.5" stroke="#9a9a9a" stroke-opacity="0.25" stroke-width="1"/><path d="M1828.3 606.8 L4979.0 995.5" stroke="#9a9a9a" stroke-opacity="0.25" stroke-width="1"/><path d="M1849.5 606.8 L5050.4 995.5" stroke="#9a9a9a" stroke-opacity="0.25" stroke-width="1"/><path d="M1870.7 606.8 L5121.8 995.5" stroke="#9a9a9a" stroke-opacity="0.25" stroke-width="1"/><path d="M1891.9 606.8 L5193.2 995.5" stroke="#9a9a9a" stroke-opacity="0.25" stroke-width="1"/><path d="M1913.1 606.8 L5264.6 995.5" stroke="#9a9a9a" stroke-opacity="0.25" stroke-width="1"/><path d="M1934.3 606.8 L5336.0 995.5" stroke="#9a9a9a" stroke-opacity="0.25" stroke-width="1"/><path d="M1955.5 606.8 L5407.4 995.5" stroke="#9a9a9a" stroke-opacity="0.25" stroke-width="1"/></g><rect x="391.5" y="757.5" width="34" height="56" fill="#0a0a14"/><rect x="393" y="792.5" width="31" height="19.5" fill="#5b4be6"/><path d="M393 797.4 H424 M393 802.3 H424 M393 807.2 H424" stroke="#1c1550" stroke-width="1"/><rect x="401" y="767" width="16" height="3" fill="#cfcfe0"/><path d="M399 792 L404 778 H412 L417 792 Z" fill="#3b3590"/><rect x="403" y="783" width="10" height="4" fill="#d8d8ee"/><rect x="393.5" y="759" width="6" height="2.4" fill="#5b4be6"/><rect x="396" y="786" width="5" height="3" fill="#b8b8d0"/><rect x="414" y="786" width="5" height="3" fill="#b8b8d0"/><ellipse cx="408.6" cy="744" rx="4.2" ry="2.2" fill="#e0605c"/><rect x="471" y="749.5" width="55" height="75.5" rx="27.5" fill="#f8f8f8" stroke="#ececec" stroke-width="1.2" opacity="0.85"/><path d="M505 823 Q520 818 524 803" fill="none" stroke="#ffffff" stroke-width="1.6"/><rect x="488.5" y="752" width="14" height="21" fill="#9aa6b6"/><rect x="488.5" y="752" width="14" height="4" fill="#cfd6de"/><rect x="487" y="764" width="3" height="6" fill="#333a48"/><rect x="488.5" y="772" width="14" height="10" fill="#c37c34"/><rect x="495" y="645" width="7" height="14" fill="#dfe6f0" opacity="0.8"/><rect x="496" y="656" width="6" height="8" fill="#f0c8a0" opacity="0.8"/><rect x="496" y="680" width="6" height="8" fill="#f3d2b0" opacity="0.7"/><rect x="496" y="696" width="5" height="7" fill="#f3d2b0" opacity="0.7"/><path d="M379.7 345 L400 343.4 L446.4 343.4 L446.4 350.4 L480.7 350.4 L480.7 372.3 L499 372.3 L499 377.2 L532.5 377.2 L532.5 366.2 L562.3 366.2 L562.3 363.8 L575 365 L628.4 366.2 L628.4 393 L631.4 393 L631.7 373.4 L699.5 376.2 L699.5 431 L702.8 431 L701.2 493.4 L716 493.4 L715 540 L711.5 626.4 L696.4 626.4 L695.6 633 L691.4 633 L691.4 654.6 L701.4 655.4 L695.6 781.6 L704.4 782 L699.4 896.6 L691.4 896.6 L688.2 967 L673.2 967.8 L672.2 990.4 L363 990.4 L363 975.2 L352 974.8 L348 880 L348 870 L352 869.4 L351 803 L338 802.4 L336 770 L333 684.6 L341 684.6 L339 570 L344 570 L343 530 L339.4 439 L347.2 439 L347.2 427.6 L371.8 427.6 L371.4 372.2 L374.4 367 L380.4 367 Z" fill="none" stroke="#f0742a" stroke-width="3.8" stroke-linejoin="round"/><path d="M546.6 522 V538.6" stroke="#f0762a" stroke-width="2.6"/></svg>
<div style="left:963px;top:152px;width:1px;height:839px;background:#2a2a2a;"></div>
<div style="left:17px;top:156px;width:76px;height:378px;background:#0f0f0f;border-radius:7px;"></div>
<div style="left:39px;top:168.4px;width:32px;height:1.6px;background:#5a5a5a;"></div>
<div style="left:39px;top:174.2px;width:32px;height:1.6px;background:#5a5a5a;"></div>
<div style="left:23px;top:191px;width:64px;height:40px;background:#3a5170;border-radius:6px 6px 0 0;"></div>
<div style="left:23px;top:233px;width:64px;height:40px;background:#484848;border-radius:0;"></div>
<div style="left:23px;top:275px;width:64px;height:40px;background:#484848;border-radius:0;"></div>
<div style="left:23px;top:317px;width:64px;height:40px;background:#484848;border-radius:0;"></div>
<div style="left:23px;top:359px;width:64px;height:40px;background:#484848;border-radius:0;"></div>
<div style="left:23px;top:401px;width:64px;height:40px;background:#484848;border-radius:0 0 6px 6px;"></div>
<div style="left:23px;top:447px;width:64px;height:40px;background:#484848;border-radius:6px 6px 0 0;"></div>
<div style="left:23px;top:489px;width:64px;height:40px;background:#484848;border-radius:0 0 6px 6px;"></div>
<svg style="left:39px;top:193px;" width="32" height="36" viewBox="0 0 32 36"><g fill="#b8b8b8"><rect x="9" y="3.6" width="3.6" height="17" rx="1.8" transform="rotate(-9 10.8 12)"/><rect x="14.2" y="1.6" width="3.8" height="18" rx="1.9"/><rect x="19.4" y="3" width="3.6" height="17" rx="1.8" transform="rotate(8 21.2 11.5)"/><rect x="24.4" y="8.4" width="3.4" height="14" rx="1.7" transform="rotate(22 26 15)"/><path d="M3.2 13.4 Q5.4 12.2 6.8 14.6 L10 21 L24.6 18 L22 29 Q21.6 31 19.6 31 H12.6 Q10.8 31 9.8 29.4 L2.8 16 Q2.2 14.4 3.2 13.4 Z"/></g></svg>
<svg style="left:38px;top:236px;" width="34" height="34" viewBox="0 0 34 34"><g stroke="#b4b4b4" fill="none" stroke-width="2"><path d="M17 2.6 V13 M17 21 V31.4 M2.6 17 H13 M21 17 H31.4"/><path d="M12.4 7.2 L17 2.6 L21.6 7.2 M12.4 26.8 L17 31.4 L21.6 26.8 M7.2 12.4 L2.6 17 L7.2 21.6 M26.8 12.4 L31.4 17 L26.8 21.6"/></g></svg>
<svg style="left:38px;top:278px;" width="34" height="34" viewBox="0 0 34 34"><g stroke="#b4b4b4" fill="none" stroke-width="2"><path d="M17.6 30 A13 13 0 0 0 22 5.4"/><path d="M14 4.4 A13 13 0 0 0 10.4 28.6"/><path d="M22 12 V4.4 H30"/><path d="M10.4 22 V29.6 H3"/></g></svg>
<svg style="left:38px;top:320px;" width="34" height="34" viewBox="0 0 34 34"><g stroke="#b4b4b4" fill="none" stroke-width="2"><rect x="3.6" y="3.6" width="27" height="26"/><rect x="3.6" y="21.6" width="8" height="8"/><path d="M14.6 18.6 L24.6 8.6 M17 8.4 H24.8 V16.2"/></g></svg>
<svg style="left:38px;top:362px;" width="34" height="34" viewBox="0 0 34 34"><g fill="#b4b4b4"><rect x="3" y="3.6" width="6.4" height="6.4"/><rect x="24.6" y="3.6" width="6.4" height="6.4"/><rect x="3" y="24.6" width="6.4" height="6.4"/><rect x="24.6" y="24.6" width="6.4" height="6.4"/></g><g stroke="#b4b4b4" stroke-width="2"><path d="M12 6.8 H22.6 M12 27.8 H22.6 M6.2 12.4 V22.4 M27.8 12.4 V22.4"/></g></svg>
<svg style="left:38px;top:404px;" width="34" height="34" viewBox="0 0 34 34"><g stroke="#b4b4b4" fill="none" stroke-width="2"><path d="M9.4 6.2 A13 13 0 0 1 14.6 4.2 M19.4 4.2 A13 13 0 0 1 24.6 6.2 M28 9.6 A13 13 0 0 1 29.8 14.6 M29.8 19.4 A13 13 0 0 1 28 24.4 M24.6 27.8 A13 13 0 0 1 19.4 29.8 M14.6 29.8 A13 13 0 0 1 9.4 27.8 M6 24.4 A13 13 0 0 1 4.2 19.4 M4.2 14.6 A13 13 0 0 1 6 9.6"/><path d="M17 7.6 V26.4 M7.6 17 H26.4 M13.6 11 L17 7.6 L20.4 11 M13.6 23 L17 26.4 L20.4 23 M11 13.6 L7.6 17 L11 20.4 M23 13.6 L26.4 17 L23 20.4"/></g><path d="M27 1.4 H32.6 V7 Z M1.4 27 V32.6 H7 Z" fill="#b4b4b4"/></svg>
<svg style="left:38px;top:450px;" width="34" height="34" viewBox="0 0 34 34"><g stroke="#b4b4b4" fill="none" stroke-width="2"><path d="M9.4 6.2 A13 13 0 0 1 14.6 4.2 M19.4 4.2 A13 13 0 0 1 24.6 6.2 M28 9.6 A13 13 0 0 1 29.8 14.6 M29.8 19.4 A13 13 0 0 1 28 24.4 M24.6 27.8 A13 13 0 0 1 19.4 29.8 M14.6 29.8 A13 13 0 0 1 9.4 27.8 M6 24.4 A13 13 0 0 1 4.2 19.4 M4.2 14.6 A13 13 0 0 1 6 9.6"/><path d="M17 7.6 V26.4 M7.6 17 H26.4 M13.6 11 L17 7.6 L20.4 11 M13.6 23 L17 26.4 L20.4 23 M11 13.6 L7.6 17 L11 20.4 M23 13.6 L26.4 17 L23 20.4"/></g><path d="M27 1.4 H32.6 V7 Z M1.4 27 V32.6 H7 Z" fill="#b4b4b4"/></svg>
<svg style="left:38px;top:492px;" width="36" height="34" viewBox="0 0 36 34"><path d="M9.6 3 L5 27.4 L27.6 22.6" fill="none" stroke="#6cb0e0" stroke-width="2.2"/><path d="M5 27.4 L9 20.6 L11.6 25.8 Z" fill="#6cb0e0"/><path d="M11.4 22.6 L17.6 7.8 Q22.6 6.6 25.6 12 Q26 15.6 24 17 Z" fill="#b4b4b4"/></svg>
<svg style="left:790px;top:170px;" width="150" height="150" viewBox="0 0 150 150"><defs><linearGradient id="cg" x1="0" x2="1"><stop offset="0" stop-color="#7fbf48"/><stop offset="0.45" stop-color="#a4e05e"/><stop offset="1" stop-color="#79b944"/></linearGradient><linearGradient id="cr" y1="0" y2="1" x1="0" x2="0"><stop offset="0" stop-color="#c9553f"/><stop offset="0.5" stop-color="#e06a50"/><stop offset="1" stop-color="#b84c38"/></linearGradient><linearGradient id="cl" y1="0" y2="1" x1="0" x2="0"><stop offset="0" stop-color="#9a9a9a"/><stop offset="0.45" stop-color="#dcdcdc"/><stop offset="1" stop-color="#8a8a8a"/></linearGradient><linearGradient id="cb" x1="0" x2="1"><stop offset="0" stop-color="#9a9a9a"/><stop offset="0.45" stop-color="#dadada"/><stop offset="1" stop-color="#8c8c8c"/></linearGradient></defs><path d="M50.4 30 Q64 25.6 77.6 30 L64.4 69.4 Z" fill="url(#cg)"/><path d="M64.2 103 L76.6 137 Q64 143.6 51.8 137 Z" fill="url(#cb)"/><path d="M47.6 85.6 L10 97.6 Q5 85.6 10 73.4 Z" fill="url(#cl)"/><path d="M80 86 L117 73.6 Q123.6 86 118 98.6 Z" fill="url(#cr)"/><rect x="50" y="72.4" width="27.6" height="29" fill="#efefef"/><rect x="50" y="72.4" width="27.6" height="2.6" fill="#b6b6b6"/><rect x="75.8" y="72.4" width="1.8" height="29" fill="#d2d2d2"/></svg>
<span id="t13" style="left:848px;top:172.38px;font-size:22px;line-height:22px;color:#ffffff;font-weight:700;letter-spacing:0.48px;">y</span>
<span id="t14" style="left:916.4px;top:242.18px;font-size:22px;line-height:22px;color:#ffffff;font-weight:700;letter-spacing:0.48px;">x</span>
<svg style="left:910px;top:183px;" width="20" height="22" viewBox="0 0 20 22"><rect x="2.4" y="10.2" width="14" height="9.6" fill="#cfcfcf"/><path d="M5 10 V7 A4.4 4.4 0 0 1 13.6 6 " fill="none" stroke="#cfcfcf" stroke-width="1.8"/></svg>
<svg style="left:802px;top:346px;" width="24" height="22" viewBox="0 0 24 22"><g stroke="#c0c0c0" stroke-width="1.8" fill="none"><path d="M22 1.6 L2 11 L22 20.4 M2 11 H22"/></g></svg>
<span id="t15" style="left:831px;top:344.68px;font-size:24px;line-height:24px;color:#c3c3c3;font-weight:400;letter-spacing:0.06px;">Persp</span>
<div style="left:874px;top:909px;width:86px;height:77.6px;background:#0f0f0f;border-radius:8px;"></div>
<div style="left:901px;top:921px;width:32px;height:1.8px;background:#666;"></div>
<div style="left:901px;top:927.2px;width:32px;height:1.8px;background:#666;"></div>
<div style="left:880.3px;top:943.3px;width:73.4px;height:34.2px;background:#474747;border-radius:4px;border:2px solid #323232;"></div>
<span id="t16" style="left:892.4px;top:951.07px;font-size:20px;line-height:20px;color:#b6b6b6;font-weight:400;letter-spacing:-0.73px;">Pa</span>
<svg style="left:924px;top:956px;" width="18" height="12" viewBox="0 0 18 12"><path d="M0.6 0.6 H17.2 L8.9 10.8 Z" fill="#a8a8a8"/></svg>
<svg style="left:981px;top:73px;" width="32" height="20" viewBox="0 0 32 20"><path d="M8.6 1.6 H22.4 A7.6 7.6 0 0 1 22.4 16.8 Q19.6 16.8 18 14.6 H13 Q11.4 16.8 8.6 16.8 A7.6 7.6 0 0 1 8.6 1.6 Z" fill="#b4b4b4"/><path d="M8.6 5.6 V12 M5.4 8.8 H11.8" stroke="#313131" stroke-width="1.8"/><circle cx="21" cy="10.8" r="1.6" fill="#313131"/><circle cx="24" cy="7" r="1.6" fill="#313131"/></svg>
<div style="left:968px;top:140px;width:784px;height:2px;background:#1c1c1c;"></div>
<span id="t17" style="left:977px;top:108.88px;font-size:24px;line-height:24px;color:#b6b6b6;font-weight:400;letter-spacing:0.04px;">Game</span>
<svg style="left:1124px;top:115px;" width="16" height="11" viewBox="0 0 16 11"><path d="M0.6 0.6 H14.8 L7.7 9.6 Z" fill="#a8a8a8"/></svg>
<div style="left:1148.6px;top:100px;width:2px;height:40px;background:#222;"></div>
<div style="left:1160px;top:100px;width:2px;height:40px;background:#222;"></div>
<div style="left:1150.6px;top:100px;width:9.4px;height:40px;background:#2c2c2c;"></div>
<span id="t18" style="left:1168px;top:108.88px;font-size:24px;line-height:24px;color:#b6b6b6;font-weight:400;letter-spacing:0.59px;">Free Aspect</span>
<svg style="left:1456px;top:115px;" width="16" height="11" viewBox="0 0 16 11"><path d="M0.6 0.6 H14.8 L7.7 9.6 Z" fill="#a8a8a8"/></svg>
<div style="left:1480.6px;top:100px;width:2px;height:40px;background:#222;"></div>
<span id="t19" style="left:1494.5px;top:109.68px;font-size:24px;line-height:24px;color:#b6b6b6;font-weight:400;letter-spacing:0.59px;">Scale</span>
<div style="left:1580px;top:120.4px;width:50px;height:3px;background:#555;border-radius:2px;"></div>
<div style="left:1570px;top:111px;width:20px;height:20px;background:#999999;border-radius:50%;"></div>
<span id="t20" style="left:1642px;top:109.68px;font-size:24px;line-height:24px;color:#b6b6b6;font-weight:400;letter-spacing:-0.43px;">1x</span>
<div style="left:1723.6px;top:100px;width:2px;height:40px;background:#222;"></div>
<span id="t21" style="left:1733px;top:108.88px;font-size:24px;line-height:24px;color:#555;font-weight:400;letter-spacing:0.53px;width:19px;overflow:hidden;">Pl</span>
<div style="left:968px;top:142px;width:784px;height:849px;background:#394c79;"></div>
<svg style="left:968px;top:142px;" width="784" height="849" viewBox="968 142 784 849"><rect x="1220" y="695" width="31" height="55" fill="#07060f"/><rect x="1221.5" y="729.5" width="28" height="19" fill="#5b4be6"/><path d="M1221.5 734.2 H1249.5 M1221.5 739 H1249.5 M1221.5 743.8 H1249.5" stroke="#150f40" stroke-width="1"/><rect x="1228" y="705.4" width="15" height="1.6" fill="#cfcfe0"/><path d="M1227.5 729.4 L1232 714 H1239 L1243.5 729.4 Z" fill="#3b3590"/><rect x="1231.5" y="716" width="8" height="3" fill="#d8d8ee"/><rect x="1222" y="697" width="6" height="2" fill="#5b4be6"/><rect x="1238" y="700" width="5" height="3" fill="#2a2560"/><rect x="1223" y="722" width="5" height="4" fill="#b8b8d0"/><rect x="1242" y="722" width="5" height="4" fill="#b8b8d0"/><rect x="1222" y="715" width="3" height="14" fill="#1d1a45"/><rect x="1246" y="715" width="3" height="14" fill="#1d1a45"/><rect x="1233" y="680" width="7.4" height="4" fill="#e0706c"/><g><g transform="rotate(-51 1315 643)"><path d="M1291 639.2 L1339 640.2 V645.8 L1291 646.8 Z" fill="#dcdcdc"/><rect x="1291" y="639.2" width="4" height="7.6" fill="#d39a3a"/><rect x="1301" y="639.4" width="5" height="7.2" fill="#d39a3a"/><rect x="1322" y="639.8" width="5" height="6.4" fill="#d39a3a"/><rect x="1335" y="640.1" width="4" height="5.8" fill="#d39a3a"/></g><rect x="1314.6" y="643" width="5.6" height="40" fill="#232a3c"/><rect x="1321" y="662" width="7" height="20" fill="#8e95a8"/><rect x="1322" y="658" width="4" height="5" fill="#b0443c"/><path d="M1335.2 637.6 V673.6" stroke="#20263a" stroke-width="1.4"/><path d="M1328.6 657 H1335.6" stroke="#20263a" stroke-width="1.6"/><path d="M1311 639 H1324.6" stroke="#2a3046" stroke-width="1.4"/><g stroke="#181c28" stroke-width="2.6" fill="none"><path d="M1293 742 L1270 775"/><path d="M1299 745 L1279 770"/><path d="M1338 742 L1359 762"/><path d="M1336 748 L1358 776"/><path d="M1359.6 748 V778"/></g><path d="M1268 774 L1271 778 M1358.6 776 V779" stroke="#55586a" stroke-width="2.4"/><defs><radialGradient id="cab" cx="0.5" cy="0.42" r="0.62"><stop offset="0" stop-color="#5c5048"/><stop offset="0.55" stop-color="#4b4340"/><stop offset="1" stop-color="#2a2c3a"/></radialGradient></defs><path d="M1316.5 681.4 C1336 681.4 1343 694 1343.6 712 C1344 734 1340 747 1329 751.6 C1321 754.6 1311 754.6 1303.6 751.6 C1293 747 1289 734 1289.4 712 C1290 694 1297 681.4 1316.5 681.4 Z" fill="url(#cab)" stroke="#2b3042" stroke-width="1.6"/><path d="M1291 738 C1300 745 1333 745 1342 738 C1341 747 1334 752.6 1316.5 753.4 C1299 752.6 1292 747 1291 738 Z" fill="#1d2030"/><path d="M1292 738.4 C1303 744.6 1330 744.6 1341 738.4" stroke="#7d8496" stroke-width="1.2" fill="none"/><path d="M1315 684 C1313.6 706 1313.6 722 1314 742" stroke="#2a3046" stroke-width="1.8" fill="none"/><path d="M1296 700 V722 M1336.6 700 V724" stroke="#7c8294" stroke-width="1" fill="none"/><rect x="1299" y="712" width="10" height="12" fill="#35302e"/><rect x="1322" y="714" width="12" height="10" fill="#3a3432"/><rect x="1309" y="746.6" width="14" height="3" fill="#6e7382"/></g></svg>
<div style="left:968px;top:990px;width:784px;height:1px;background:#1c1c1c;"></div>
<div style="left:1756px;top:100px;width:644px;height:1096px;background:#2c2c2c;"></div>
<div style="left:2376px;top:100px;width:22px;height:1048px;background:#2b2b2b;"></div>
<div style="left:2398px;top:62px;width:2px;height:1134px;background:#454545;"></div>
<div style="left:2364px;top:100px;width:2px;height:994px;background:#252525;"></div>
<svg style="left:1772px;top:69px;" width="26" height="26" viewBox="0 0 26 26"><circle cx="13" cy="13" r="10.4" fill="#b4b4b4"/><circle cx="13" cy="7.6" r="1.9" fill="#313131"/><rect x="11.1" y="11" width="3.8" height="8.6" fill="#313131"/></svg>
<svg style="left:1956px;top:66px;" width="40" height="32" viewBox="0 0 40 32"><circle cx="20" cy="15" r="15" fill="#2a2a2a"/><path d="M3 5.5 Q3 3.5 5 3.5 H35 Q37 3.5 37 5.5 V24 Q37 26 35 26 H26 L22.5 20 H17.5 L14 26 H5 Q3 26 3 24 Z" fill="#d2d2d2"/><circle cx="11.3" cy="14.4" r="6" fill="#2f9fcb"/><circle cx="28.7" cy="14.4" r="6" fill="#2f9fcb"/></svg>
<svg style="left:2328px;top:68px;" width="20" height="24" viewBox="0 0 20 24"><g fill="none" stroke="#b4b4b4" stroke-width="2.2"><rect x="3.2" y="11.6" width="13.6" height="9.4" rx="0.8"/><path d="M14.4 11.4 V7.6 A4.6 4.6 0 0 0 6 5.2"/></g></svg>
<div style="left:1756px;top:100px;width:620px;height:994px;overflow:hidden;">
<div style="left:10px;top:-14px;width:600px;height:196px;background:#222222;"></div>
<div style="left:12px;top:-12px;width:596px;height:30px;background:#464646;border-radius:3px;"></div>
<div style="left:18px;top:-9px;width:24px;height:24px;background:#222222;border:1.5px solid #1a1a1a;border-radius:5px;"></div>
<span id="t22" style="left:49px;top:-7.93px;font-size:20px;line-height:20px;color:#b6b6b6;font-weight:400;letter-spacing:0.29px;">Sub Emitters</span>
<div style="left:12px;top:20px;width:596px;height:30px;background:#464646;border-radius:3px;"></div>
<div style="left:18px;top:23px;width:24px;height:24px;background:#222222;border:1.5px solid #1a1a1a;border-radius:5px;"></div>
<span id="t23" style="left:49px;top:24.07px;font-size:20px;line-height:20px;color:#b6b6b6;font-weight:400;letter-spacing:0.83px;">Texture Sheet Animation</span>
<div style="left:12px;top:52px;width:596px;height:30px;background:#464646;border-radius:3px;"></div>
<div style="left:18px;top:55px;width:24px;height:24px;background:#222222;border:1.5px solid #1a1a1a;border-radius:5px;"></div>
<span id="t24" style="left:49px;top:56.07px;font-size:20px;line-height:20px;color:#b6b6b6;font-weight:400;letter-spacing:0.69px;">Lights</span>
<div style="left:12px;top:84px;width:596px;height:30px;background:#464646;border-radius:3px;"></div>
<div style="left:18px;top:87px;width:24px;height:24px;background:#222222;border:1.5px solid #1a1a1a;border-radius:5px;"></div>
<span id="t25" style="left:49px;top:88.07px;font-size:20px;line-height:20px;color:#b6b6b6;font-weight:400;letter-spacing:0.14px;">Trails</span>
<div style="left:12px;top:116px;width:596px;height:30px;background:#464646;border-radius:3px;"></div>
<div style="left:18px;top:119px;width:24px;height:24px;background:#222222;border:1.5px solid #1a1a1a;border-radius:5px;"></div>
<span id="t26" style="left:49px;top:120.07px;font-size:20px;line-height:20px;color:#b6b6b6;font-weight:400;letter-spacing:0.75px;">Custom Data</span>
<div style="left:12px;top:148px;width:596px;height:30px;background:#464646;border-radius:3px;"></div>
<div style="left:18px;top:151px;width:24px;height:24px;background:#222222;border:1.5px solid #1a1a1a;border-radius:5px;"></div>
<svg style="left:18px;top:151px;" width="24" height="24" viewBox="0 0 24 24"><path d="M5.2 12.6 L9.8 17.2 L19 6.6" fill="none" stroke="#c8c8c8" stroke-width="2.4"/></svg>
<span id="t27" style="left:49px;top:152.07px;font-size:20px;line-height:20px;color:#b6b6b6;font-weight:400;letter-spacing:0.45px;">Renderer</span>
<div style="left:12px;top:178px;width:596px;height:786px;background:#303030;border-radius:0 0 7px 7px;border:1px solid #262626;border-top:none;"></div>
<div style="left:12px;top:178px;width:596px;height:8px;background:linear-gradient(#262626,#303030);"></div>
<span id="t28" style="left:21px;top:188.87px;font-size:20px;line-height:20px;color:#6f98dc;font-weight:400;letter-spacing:0.53px;">Render Mode</span>
<div style="left:250px;top:186px;width:352px;height:28px;background:#464646;border-radius:6px;border:2px solid #3b74b8;"></div>
<span id="t29" style="left:256px;top:189.87px;font-size:20px;line-height:20px;color:#c2c2c2;font-weight:400;letter-spacing:0.79px;">Stretched Billboard</span>
<svg style="left:575px;top:196px;" width="16" height="11" viewBox="0 0 16 11"><path d="M0.6 0.6 H14.6 L7.6 9.4 Z" fill="#a6a6a6"/></svg>
<span id="t30" style="left:50.5px;top:218.87px;font-size:20px;line-height:20px;color:#b6b6b6;font-weight:400;letter-spacing:0.57px;">Camera Scale</span>
<div style="left:250px;top:217px;width:352px;height:26px;background:#222222;border-radius:5px;border:1px solid #1b1b1b;border-top:2px solid #0f0f0f;"></div>
<span id="t31" style="left:256px;top:219.67px;font-size:20px;line-height:20px;color:#c2c2c2;font-weight:400;letter-spacing:0.44px;">0</span>
<span id="t32" style="left:50.5px;top:248.87px;font-size:20px;line-height:20px;color:#b6b6b6;font-weight:400;letter-spacing:0.37px;">Speed Scale</span>
<div style="left:250px;top:247px;width:352px;height:26px;background:#222222;border-radius:5px;border:1px solid #1b1b1b;border-top:2px solid #0f0f0f;"></div>
<span id="t33" style="left:256px;top:249.67px;font-size:20px;line-height:20px;color:#c2c2c2;font-weight:400;letter-spacing:0.44px;">0</span>
<span id="t34" style="left:50.5px;top:278.87px;font-size:20px;line-height:20px;color:#b6b6b6;font-weight:400;letter-spacing:0.69px;">Length Scale</span>
<div style="left:250px;top:277px;width:352px;height:26px;background:#222222;border-radius:5px;border:1px solid #1b1b1b;border-top:2px solid #0f0f0f;"></div>
<span id="t35" style="left:256px;top:279.67px;font-size:20px;line-height:20px;color:#c2c2c2;font-weight:400;letter-spacing:0.44px;">2</span>
<span id="t36" style="left:50.5px;top:308.87px;font-size:20px;line-height:20px;color:#b6b6b6;font-weight:400;letter-spacing:0.99px;">Freeform Stretching</span>
<div style="left:252px;top:307px;width:24px;height:24px;background:#222222;border:1.5px solid #1a1a1a;border-radius:5px;"></div>
<span id="t37" style="left:50.5px;top:338.87px;font-size:20px;line-height:20px;color:#6c6c6c;font-weight:400;letter-spacing:0.79px;">Rotate With Stretch</span>
<div style="left:252px;top:337px;width:24px;height:24px;background:#2a2a2a;border:1px solid #272727;border-radius:5px;"></div>
<svg style="left:252px;top:337px;" width="24" height="24" viewBox="0 0 24 24"><path d="M5.2 12.6 L9.8 17.2 L19 6.6" fill="none" stroke="#6a6a6a" stroke-width="2.4"/></svg>
<span id="t38" style="left:21px;top:368.87px;font-size:20px;line-height:20px;color:#b6b6b6;font-weight:400;letter-spacing:0.69px;">Normal Direction</span>
<div style="left:250px;top:367px;width:352px;height:26px;background:#222222;border-radius:5px;border:1px solid #1b1b1b;border-top:2px solid #0f0f0f;"></div>
<span id="t39" style="left:256px;top:369.67px;font-size:20px;line-height:20px;color:#c2c2c2;font-weight:400;letter-spacing:0.44px;">1</span>
<span id="t40" style="left:21px;top:398.87px;font-size:20px;line-height:20px;color:#b6b6b6;font-weight:400;letter-spacing:0.79px;">Material</span>
<div style="left:250px;top:397px;width:352px;height:26px;background:#222222;border-radius:5px;border:1px solid #1b1b1b;border-top:2px solid #0f0f0f;"></div>
<div style="left:564px;top:399px;width:36px;height:22px;background:#2d2d2d;border-radius:0 4px 4px 0;"></div>
<svg style="left:256px;top:399px;" width="22" height="22" viewBox="0 0 22 22"><circle cx="11" cy="11" r="8.6" fill="none" stroke="#6fb0dc" stroke-width="1.8"/><circle cx="9.4" cy="9.6" r="6.2" fill="#76b9e4"/></svg>
<span id="t41" style="left:283px;top:399.87px;font-size:20px;line-height:20px;color:#c2c2c2;font-weight:400;letter-spacing:0.50px;">Smoke26</span>
<svg style="left:570px;top:398px;" width="24" height="24" viewBox="0 0 24 24"><circle cx="12" cy="12" r="8.4" fill="none" stroke="#c4c4c4" stroke-width="2"/><circle cx="12" cy="12" r="3.2" fill="#c4c4c4"/></svg>
<span id="t42" style="left:21px;top:428.87px;font-size:20px;line-height:20px;color:#b6b6b6;font-weight:400;letter-spacing:0.69px;">Sort Mode</span>
<div style="left:250px;top:428px;width:352px;height:24px;background:#464646;border-radius:5px;border:1px solid #2c2c2c;border-bottom-color:#242424;"></div>
<span id="t43" style="left:256px;top:429.87px;font-size:20px;line-height:20px;color:#c2c2c2;font-weight:400;letter-spacing:1.05px;">None</span>
<svg style="left:575px;top:436px;" width="16" height="11" viewBox="0 0 16 11"><path d="M0.6 0.6 H14.6 L7.6 9.4 Z" fill="#a6a6a6"/></svg>
<span id="t44" style="left:21px;top:458.87px;font-size:20px;line-height:20px;color:#b6b6b6;font-weight:400;letter-spacing:0.53px;">Sorting Fudge</span>
<div style="left:250px;top:457px;width:352px;height:26px;background:#222222;border-radius:5px;border:1px solid #1b1b1b;border-top:2px solid #0f0f0f;"></div>
<span id="t45" style="left:256px;top:459.67px;font-size:20px;line-height:20px;color:#c2c2c2;font-weight:400;letter-spacing:0.44px;">0</span>
<span id="t46" style="left:21px;top:488.87px;font-size:20px;line-height:20px;color:#b6b6b6;font-weight:400;letter-spacing:0.33px;">Min Particle Size</span>
<div style="left:250px;top:487px;width:352px;height:26px;background:#222222;border-radius:5px;border:1px solid #1b1b1b;border-top:2px solid #0f0f0f;"></div>
<span id="t47" style="left:256px;top:489.67px;font-size:20px;line-height:20px;color:#c2c2c2;font-weight:400;letter-spacing:0.44px;">0</span>
<span id="t48" style="left:21px;top:518.87px;font-size:20px;line-height:20px;color:#b6b6b6;font-weight:400;letter-spacing:0.35px;">Max Particle Size</span>
<div style="left:250px;top:517px;width:352px;height:26px;background:#222222;border-radius:5px;border:1px solid #1b1b1b;border-top:2px solid #0f0f0f;"></div>
<span id="t49" style="left:256px;top:519.67px;font-size:20px;line-height:20px;color:#c2c2c2;font-weight:400;letter-spacing:0.44px;">0.5</span>
<span id="t50" style="left:21px;top:548.87px;font-size:20px;line-height:20px;color:#b6b6b6;font-weight:400;letter-spacing:-0.43px;">Flip</span>
<span id="t51" style="left:253px;top:548.87px;font-size:20px;line-height:20px;color:#b6b6b6;font-weight:400;letter-spacing:0.44px;">X</span>
<div style="left:301px;top:547px;width:61px;height:26px;background:#222222;border-radius:5px;border:1px solid #1b1b1b;border-top:2px solid #0f0f0f;"></div>
<span id="t52" style="left:307px;top:549.67px;font-size:20px;line-height:20px;color:#c2c2c2;font-weight:400;letter-spacing:0.44px;">0</span>
<span id="t53" style="left:373px;top:548.87px;font-size:20px;line-height:20px;color:#b6b6b6;font-weight:400;letter-spacing:0.44px;">Y</span>
<div style="left:421px;top:547px;width:61px;height:26px;background:#222222;border-radius:5px;border:1px solid #1b1b1b;border-top:2px solid #0f0f0f;"></div>
<span id="t54" style="left:427px;top:549.67px;font-size:20px;line-height:20px;color:#c2c2c2;font-weight:400;letter-spacing:0.44px;">0</span>
<span id="t55" style="left:493px;top:548.87px;font-size:20px;line-height:20px;color:#b6b6b6;font-weight:400;letter-spacing:0.44px;">Z</span>
<div style="left:541px;top:547px;width:61px;height:26px;background:#222222;border-radius:5px;border:1px solid #1b1b1b;border-top:2px solid #0f0f0f;"></div>
<span id="t56" style="left:547px;top:549.67px;font-size:20px;line-height:20px;color:#c2c2c2;font-weight:400;letter-spacing:0.44px;">0</span>
<span id="t57" style="left:21px;top:578.87px;font-size:20px;line-height:20px;color:#b6b6b6;font-weight:400;letter-spacing:0.31px;">Pivot</span>
<span id="t58" style="left:253px;top:578.87px;font-size:20px;line-height:20px;color:#b6b6b6;font-weight:400;letter-spacing:0.44px;">X</span>
<div style="left:301px;top:577px;width:61px;height:26px;background:#222222;border-radius:5px;border:1px solid #1b1b1b;border-top:2px solid #0f0f0f;"></div>
<span id="t59" style="left:307px;top:579.67px;font-size:20px;line-height:20px;color:#c2c2c2;font-weight:400;letter-spacing:0.44px;">0</span>
<span id="t60" style="left:373px;top:578.87px;font-size:20px;line-height:20px;color:#b6b6b6;font-weight:400;letter-spacing:0.44px;">Y</span>
<div style="left:421px;top:577px;width:61px;height:26px;background:#222222;border-radius:5px;border:1px solid #1b1b1b;border-top:2px solid #0f0f0f;"></div>
<span id="t61" style="left:427px;top:579.67px;font-size:20px;line-height:20px;color:#c2c2c2;font-weight:400;letter-spacing:0.44px;">0</span>
<span id="t62" style="left:493px;top:578.87px;font-size:20px;line-height:20px;color:#b6b6b6;font-weight:400;letter-spacing:0.44px;">Z</span>
<div style="left:541px;top:577px;width:61px;height:26px;background:#222222;border-radius:5px;border:1px solid #1b1b1b;border-top:2px solid #0f0f0f;"></div>
<span id="t63" style="left:547px;top:579.67px;font-size:20px;line-height:20px;color:#c2c2c2;font-weight:400;letter-spacing:0.44px;">0</span>
<span id="t64" style="left:21px;top:608.87px;font-size:20px;line-height:20px;color:#b6b6b6;font-weight:400;letter-spacing:0.29px;">Visualize Pivot</span>
<div style="left:252px;top:607px;width:24px;height:24px;background:#222222;border:1.5px solid #1a1a1a;border-radius:5px;"></div>
<span id="t65" style="left:21px;top:638.87px;font-size:20px;line-height:20px;color:#b6b6b6;font-weight:400;letter-spacing:0.36px;">Masking</span>
<div style="left:250px;top:638px;width:352px;height:24px;background:#464646;border-radius:5px;border:1px solid #2c2c2c;border-bottom-color:#242424;"></div>
<span id="t66" style="left:256px;top:639.87px;font-size:20px;line-height:20px;color:#c2c2c2;font-weight:400;letter-spacing:0.64px;">No Masking</span>
<svg style="left:575px;top:646px;" width="16" height="11" viewBox="0 0 16 11"><path d="M0.6 0.6 H14.6 L7.6 9.4 Z" fill="#a6a6a6"/></svg>
<span id="t67" style="left:21px;top:668.87px;font-size:20px;line-height:20px;color:#b6b6b6;font-weight:400;letter-spacing:0.79px;width:229.6px;overflow:hidden;">Apply Active Color Space</span>
<div style="left:252px;top:667px;width:24px;height:24px;background:#222222;border:1.5px solid #1a1a1a;border-radius:5px;"></div>
<svg style="left:252px;top:667px;" width="24" height="24" viewBox="0 0 24 24"><path d="M5.2 12.6 L9.8 17.2 L19 6.6" fill="none" stroke="#c8c8c8" stroke-width="2.4"/></svg>
<span id="t68" style="left:21px;top:698.87px;font-size:20px;line-height:20px;color:#b6b6b6;font-weight:400;letter-spacing:0.87px;">Custom Vertex Streams</span>
<div style="left:252px;top:697px;width:24px;height:24px;background:#222222;border:1.5px solid #1a1a1a;border-radius:5px;"></div>
<span id="t69" style="left:21px;top:744.07px;font-size:20px;line-height:20px;color:#b6b6b6;font-weight:400;letter-spacing:0.54px;">Cast Shadows</span>
<div style="left:250px;top:744px;width:352px;height:24px;background:#464646;border-radius:5px;border:1px solid #2c2c2c;border-bottom-color:#242424;"></div>
<span id="t70" style="left:256px;top:745.87px;font-size:20px;line-height:20px;color:#c2c2c2;font-weight:400;letter-spacing:1.56px;">Off</span>
<svg style="left:575px;top:752px;" width="16" height="11" viewBox="0 0 16 11"><path d="M0.6 0.6 H14.6 L7.6 9.4 Z" fill="#a6a6a6"/></svg>
<span id="t71" style="left:21px;top:774.47px;font-size:20px;line-height:20px;color:#b6b6b6;font-weight:400;letter-spacing:0.43px;">Shadow Bias</span>
<div style="left:250px;top:773px;width:352px;height:26px;background:#222222;border-radius:5px;border:1px solid #1b1b1b;border-top:2px solid #0f0f0f;"></div>
<span id="t72" style="left:256px;top:775.67px;font-size:20px;line-height:20px;color:#c2c2c2;font-weight:400;letter-spacing:0.44px;">0</span>
<span id="t73" style="left:21px;top:804.87px;font-size:20px;line-height:20px;color:#b6b6b6;font-weight:400;letter-spacing:1.09px;">Motion Vectors</span>
<div style="left:250px;top:804px;width:352px;height:24px;background:#464646;border-radius:5px;border:1px solid #2c2c2c;border-bottom-color:#242424;"></div>
<span id="t74" style="left:256px;top:805.87px;font-size:20px;line-height:20px;color:#c2c2c2;font-weight:400;letter-spacing:0.76px;">Per Object Motion</span>
<svg style="left:575px;top:812px;" width="16" height="11" viewBox="0 0 16 11"><path d="M0.6 0.6 H14.6 L7.6 9.4 Z" fill="#a6a6a6"/></svg>
<span id="t75" style="left:21px;top:839.67px;font-size:20px;line-height:20px;color:#b6b6b6;font-weight:400;letter-spacing:0.69px;">Sorting Layer ID</span>
<div style="left:254px;top:834px;width:348px;height:24px;background:#464646;border-radius:5px;border:1px solid #2c2c2c;border-bottom-color:#242424;"></div>
<span id="t76" style="left:260px;top:835.87px;font-size:20px;line-height:20px;color:#c2c2c2;font-weight:400;letter-spacing:0.80px;">Default</span>
<svg style="left:575px;top:842px;" width="16" height="11" viewBox="0 0 16 11"><path d="M0.6 0.6 H14.6 L7.6 9.4 Z" fill="#a6a6a6"/></svg>
<span id="t77" style="left:21px;top:864.87px;font-size:20px;line-height:20px;color:#b6b6b6;font-weight:400;letter-spacing:0.80px;">Order in Layer</span>
<div style="left:250px;top:863px;width:352px;height:26px;background:#222222;border-radius:5px;border:1px solid #1b1b1b;border-top:2px solid #0f0f0f;"></div>
<span id="t78" style="left:256px;top:865.67px;font-size:20px;line-height:20px;color:#c2c2c2;font-weight:400;letter-spacing:0.44px;">0</span>
<span id="t79" style="left:21px;top:894.67px;font-size:20px;line-height:20px;color:#b6b6b6;font-weight:400;letter-spacing:0.64px;">Light Probes</span>
<div style="left:250px;top:894px;width:352px;height:24px;background:#464646;border-radius:5px;border:1px solid #2c2c2c;border-bottom-color:#242424;"></div>
<span id="t80" style="left:256px;top:895.87px;font-size:20px;line-height:20px;color:#c2c2c2;font-weight:400;letter-spacing:1.56px;">Off</span>
<svg style="left:575px;top:902px;" width="16" height="11" viewBox="0 0 16 11"><path d="M0.6 0.6 H14.6 L7.6 9.4 Z" fill="#a6a6a6"/></svg>
<span id="t81" style="left:21px;top:924.67px;font-size:20px;line-height:20px;color:#b6b6b6;font-weight:400;letter-spacing:0.64px;">Rendering Layer Mask</span>
<div style="left:250px;top:924px;width:352px;height:24px;background:#464646;border-radius:5px;border:1px solid #2c2c2c;border-bottom-color:#242424;"></div>
<span id="t82" style="left:256px;top:925.87px;font-size:20px;line-height:20px;color:#c2c2c2;font-weight:400;letter-spacing:0.80px;">Default</span>
<svg style="left:575px;top:932px;" width="16" height="11" viewBox="0 0 16 11"><path d="M0.6 0.6 H14.6 L7.6 9.4 Z" fill="#a6a6a6"/></svg>
</div>
<div style="left:1763px;top:269px;width:617px;height:67px;border:5px solid #ee4125;"></div>
<div style="left:2378px;top:690px;width:19.5px;height:325px;background:#4d4d4d;border-radius:10px;"></div>
<svg style="left:2380px;top:110px;" width="16" height="11" viewBox="0 0 16 11"><path d="M0.6 10.2 H14.8 L7.7 1 Z" fill="#a6a6a6"/></svg>
<svg style="left:2380px;top:1127px;" width="16" height="11" viewBox="0 0 16 11"><path d="M0.6 0.8 H14.8 L7.7 10 Z" fill="#a6a6a6"/></svg>
<div style="left:1756px;top:1094px;width:620px;height:2px;background:#1c1c1c;"></div>
<div style="left:1756px;top:1096px;width:620px;height:40px;background:#303030;"></div>
<div style="left:1756px;top:1136px;width:620px;height:12px;background:#2c2c2c;"></div>
<div style="left:2038px;top:1142px;width:326px;height:6px;background:#252525;border-radius:7px 7px 0 0;"></div>
<svg style="left:1768px;top:1108px;" width="18" height="17" viewBox="0 0 18 17"><path d="M0.5 0.5 H17 L8.7 16 Z" fill="#565656"/></svg>
<svg style="left:1801px;top:1101px;" width="22" height="30" viewBox="0 0 22 30"><path d="M1 1 H15 L21 7 V29 H1 Z" fill="#d8dde0"/><path d="M15 1 L21 7 H15 Z" fill="#a9b2b8"/></svg>
<span id="t83" style="left:1804.5px;top:1112.50px;font-size:13px;line-height:13px;color:#3c9bc0;font-weight:700;letter-spacing:0.29px;letter-spacing:-0.5px;">C#</span>
<span id="t84" style="left:1876.5px;top:1104.88px;font-size:24px;line-height:24px;color:#afafaf;font-weight:700;letter-spacing:0.13px;">Debug Poly Spatial Game Objec</span>
<svg style="left:2257px;top:1105px;" width="22" height="22" viewBox="0 0 22 22"><circle cx="11" cy="11" r="10" fill="#b4b4b4"/></svg>
<span id="t85" style="left:2262.6px;top:1108.21px;font-size:17px;line-height:17px;color:#303030;font-weight:700;letter-spacing:0.37px;">?</span>
<svg style="left:2296px;top:1104px;" width="24" height="24" viewBox="0 0 24 24"><g stroke="#b4b4b4" stroke-width="2.4" fill="none"><path d="M2 7 H13.4 M20 7 H22 M2 17 H6 M13 17 H22"/><path d="M16.6 2.5 V11.5 M9.6 12.5 V21.5" stroke-width="3.4" stroke-linecap="round"/></g></svg>
<div style="left:2345.4px;top:1105.9px;width:5.2px;height:5.2px;background:#b4b4b4;border-radius:50%;"></div>
<div style="left:2345.4px;top:1113.4px;width:5.2px;height:5.2px;background:#b4b4b4;border-radius:50%;"></div>
<div style="left:2345.4px;top:1120.9px;width:5.2px;height:5.2px;background:#b4b4b4;border-radius:50%;"></div>
<div style="left:1756px;top:1148px;width:644px;height:2px;background:#1c1c1c;"></div>
<div style="left:1756px;top:1150px;width:644px;height:40px;background:#2e2e2e;"></div>
<div style="left:1756px;top:1190px;width:644px;height:6px;background:#161616;"></div>
<div style="left:2366px;top:1150px;width:2px;height:40px;background:#1f1f1f;"></div>
<span id="t86" style="left:1770.5px;top:1158.88px;font-size:24px;line-height:24px;color:#afafaf;font-weight:700;letter-spacing:0.37px;">Particle System Curves</span>
<div style="left:2056px;top:1167px;width:306px;height:2px;background:#505050;"></div>
<div style="left:2056px;top:1173px;width:306px;height:2px;background:#505050;"></div>
<div style="left:2382.4px;top:1160.0px;width:5.2px;height:5.2px;background:#b4b4b4;border-radius:50%;"></div>
<div style="left:2382.4px;top:1167.4px;width:5.2px;height:5.2px;background:#b4b4b4;border-radius:50%;"></div>
<div style="left:2382.4px;top:1174.9px;width:5.2px;height:5.2px;background:#b4b4b4;border-radius:50%;"></div>
<svg style="left:221px;top:1002px;" width="20" height="24" viewBox="0 0 20 24"><g fill="none" stroke="#b4b4b4" stroke-width="2.2"><rect x="3.2" y="11.6" width="13.6" height="9.4" rx="0.8"/><path d="M14.4 11.4 V7.6 A4.6 4.6 0 0 0 6 5.2"/></g></svg>
<div style="left:262.4px;top:1003.4px;width:5.2px;height:5.2px;background:#b4b4b4;border-radius:50%;"></div>
<div style="left:262.4px;top:1010.9px;width:5.2px;height:5.2px;background:#b4b4b4;border-radius:50%;"></div>
<div style="left:262.4px;top:1018.4px;width:5.2px;height:5.2px;background:#b4b4b4;border-radius:50%;"></div>
<div style="left:0px;top:1032px;width:291px;height:42px;background:#2e2e2e;"></div>
<div style="left:0px;top:1073px;width:291px;height:2px;background:#1e1e1e;"></div>
<div style="left:0px;top:1075px;width:291px;height:121px;background:#2b2b2b;"></div>
<div style="left:266px;top:1075px;width:1px;height:121px;background:#262626;"></div>
<div style="left:50px;top:1032px;width:2px;height:41px;background:#262626;"></div>
<div style="left:103px;top:1032px;width:2px;height:41px;background:#262626;"></div>
<div style="left:155px;top:1032px;width:2px;height:41px;background:#262626;"></div>
<div style="left:207px;top:1032px;width:2px;height:41px;background:#262626;"></div>
<div style="left:-10px;top:1037px;width:56px;height:32px;background:#1c1c1c;border-radius:8px;border:1px solid #161616;"></div>
<div style="left:11px;top:1040px;width:34px;height:26px;background:#2e2e2e;border-radius:0 7px 7px 0;"></div>
<svg style="left:14px;top:1040px;" width="28" height="28" viewBox="0 0 28 28"><g fill="none" stroke="#b4b4b4" stroke-width="2"><path d="M10 5 H24 V19 H16"/><rect x="3" y="17" width="8" height="8"/><path d="M12 16 L19.6 8.6 M13.6 8.4 H19.8 V14.6"/></g></svg>
<svg style="left:62px;top:1038px;" width="30" height="32" viewBox="0 0 30 32"><rect x="6" y="2" width="12" height="12" fill="#b4b4b4"/><circle cx="10" cy="21" r="8" fill="#b4b4b4" stroke="#2e2e2e" stroke-width="1.6"/><path d="M20 8.6 L27.6 22.6 H15 Z" fill="#b4b4b4" stroke="#2e2e2e" stroke-width="1.4"/></svg>
<svg style="left:114px;top:1040px;" width="28" height="28" viewBox="0 0 28 28"><path d="M3 15.6 L15 4 L24.6 4.6 L25 13.6 L12.6 25 Z" fill="#b4b4b4"/><circle cx="20.4" cy="9" r="2" fill="#2e2e2e"/></svg>
<svg style="left:166px;top:1038px;" width="28" height="30" viewBox="0 0 28 30"><path d="M8.4 1.6 H19.6 L26.6 8.6 V20.6 L19.6 27.6 H8.4 L1.4 20.6 V8.6 Z" fill="#b4b4b4"/><rect x="12.5" y="6" width="3" height="12.6" rx="1.4" fill="#2e2e2e"/><circle cx="14" cy="22.6" r="1.9" fill="#2e2e2e"/></svg>
<svg style="left:218px;top:1040px;" width="32" height="28" viewBox="0 0 32 28"><g fill="none" stroke="#b4b4b4" stroke-width="2"><path d="M2.6 14 Q15 1.6 28.6 13.6 Q15 27 2.6 14 Z"/><path d="M11 17 A5 5 0 0 1 19.6 11.4"/></g><path d="M4 24.6 L24.6 2.6" stroke="#b4b4b4" stroke-width="2.6" stroke-linecap="round"/></svg>
<span id="t87" style="left:253px;top:1041.28px;font-size:24px;line-height:24px;color:#b6b6b6;font-weight:400;letter-spacing:0.45px;">38</span>
<svg style="left:271px;top:1086px;" width="16" height="11" viewBox="0 0 16 11"><path d="M0.8 9.6 H14.6 L7.7 1.2 Z" fill="#a6a6a6"/></svg>
<div style="left:295px;top:1032px;width:1457px;height:42px;background:#2e2e2e;"></div>
<div style="left:295px;top:1073px;width:1457px;height:2px;background:#1e1e1e;"></div>
<div style="left:295px;top:1075px;width:1457px;height:39px;background:#2c2c2c;"></div>
<div style="left:295px;top:1114px;width:1457px;height:82px;background:#202020;"></div>
<div style="left:295px;top:1114px;width:1457px;height:8px;background:linear-gradient(#262626,#202020);"></div>
<svg style="left:309px;top:1002px;" width="28" height="24" viewBox="0 0 28 24"><rect x="2" y="1.4" width="5.8" height="21.6" rx="0.8" fill="#b4b4b4"/><rect x="20" y="1.4" width="5.8" height="21.6" rx="0.8" fill="#b4b4b4"/><path d="M7 7 H21 M7 17.6 H21" stroke="#b4b4b4" stroke-width="2.2"/><g fill="#303030"><rect x="3.6" y="3.6" width="2.6" height="2.6"/><rect x="3.6" y="8.6" width="2.6" height="2.6"/><rect x="3.6" y="13.6" width="2.6" height="2.6"/><rect x="3.6" y="18.6" width="2.6" height="2.6"/><rect x="21.6" y="3.6" width="2.6" height="2.6"/><rect x="21.6" y="8.6" width="2.6" height="2.6"/><rect x="21.6" y="13.6" width="2.6" height="2.6"/><rect x="21.6" y="18.6" width="2.6" height="2.6"/></g></svg>
<span id="t88" style="left:344.6px;top:1003.48px;font-size:24px;line-height:24px;color:#b6b6b6;font-weight:400;letter-spacing:0.52px;">Timeline</span>
<svg style="left:491px;top:1003px;" width="24" height="22" viewBox="0 0 24 22"><rect x="1.6" y="0.6" width="20" height="21" rx="1.8" fill="#b4b4b4"/><path d="M4.4 5.4 H18.8 M4.4 9.4 H18.8 M4.4 13.4 H18.8 M4.4 17.4 H14" stroke="#1f1f1f" stroke-width="2"/></svg>
<span id="t89" style="left:524px;top:1003.48px;font-size:24px;line-height:24px;color:#b6b6b6;font-weight:400;letter-spacing:0.49px;">Console</span>
<svg style="left:666px;top:1002px;" width="26" height="26" viewBox="0 0 26 26"><circle cx="12.6" cy="12.6" r="11.6" fill="#b4b4b4"/><path d="M12.6 5 V13 H19.6" fill="none" stroke="#1f1f1f" stroke-width="2.4"/></svg>
<span id="t90" style="left:700px;top:1003.48px;font-size:24px;line-height:24px;color:#b6b6b6;font-weight:400;letter-spacing:0.47px;">Animation</span>
<svg style="left:863px;top:999px;" width="30" height="32" viewBox="0 0 30 32"><path d="M15 2.2 L27 9 V23 L15 29.8 L3 23 V9 Z" fill="none" stroke="#b4b4b4" stroke-width="3"/><path d="M10.6 10.6 H15 Q20.6 10.6 20.6 16 Q20.6 21.4 15 21.4 H10.6 Z" fill="none" stroke="#b4b4b4" stroke-width="2.4"/></svg>
<span id="t91" style="left:903.4px;top:1003.48px;font-size:24px;line-height:24px;color:#b6b6b6;font-weight:400;letter-spacing:0.57px;">Unity Version Control</span>
<svg style="left:1682px;top:1002px;" width="20" height="24" viewBox="0 0 20 24"><g fill="none" stroke="#6a6a6a" stroke-width="2.2"><rect x="3.2" y="11.6" width="13.6" height="9.4" rx="0.8"/><path d="M14.4 11.4 V7.6 A4.6 4.6 0 0 0 6 5.2"/></g></svg>
<div style="left:1723.4px;top:1003.4px;width:5.2px;height:5.2px;background:#b4b4b4;border-radius:50%;"></div>
<div style="left:1723.4px;top:1010.9px;width:5.2px;height:5.2px;background:#b4b4b4;border-radius:50%;"></div>
<div style="left:1723.4px;top:1018.4px;width:5.2px;height:5.2px;background:#b4b4b4;border-radius:50%;"></div>
<div style="left:297px;top:1033px;width:110px;height:40px;background:#383838;"></div>
<span id="t92" style="left:306.6px;top:1041.68px;font-size:24px;line-height:24px;color:#6f6f6f;font-weight:400;letter-spacing:0.81px;">Preview</span>
<div style="left:406px;top:1032px;width:2px;height:41px;background:#262626;"></div>
<div style="left:458.6px;top:1032px;width:2px;height:41px;background:#262626;"></div>
<div style="left:510.6px;top:1032px;width:2px;height:41px;background:#262626;"></div>
<div style="left:562.6px;top:1032px;width:2px;height:41px;background:#262626;"></div>
<div style="left:614.8px;top:1032px;width:2px;height:41px;background:#262626;"></div>
<div style="left:667px;top:1032px;width:2px;height:41px;background:#262626;"></div>
<div style="left:719.6px;top:1032px;width:2px;height:41px;background:#262626;"></div>
<div style="left:978.4px;top:1032px;width:2px;height:41px;background:#262626;"></div>
<svg style="left:420px;top:1041px;" width="30" height="24" viewBox="0 0 30 24"><rect x="1" y="4" width="3.4" height="16" fill="#707070"/><path d="M16 4 V20 L4.6 12 Z M27.6 4 V20 L16 12 Z" fill="#707070"/></svg>
<svg style="left:472px;top:1041px;" width="30" height="24" viewBox="0 0 30 24"><rect x="5" y="4" width="3.6" height="16" fill="#707070"/><path d="M24 3.6 V20.4 L9.6 12 Z" fill="#707070"/></svg>
<svg style="left:524px;top:1041px;" width="30" height="24" viewBox="0 0 30 24"><path d="M7 2.6 V21.4 L23.6 12 Z" fill="#707070"/></svg>
<svg style="left:576px;top:1041px;" width="30" height="24" viewBox="0 0 30 24"><path d="M5 3.6 V20.4 L19.4 12 Z" fill="#707070"/><rect x="20.6" y="4" width="3.6" height="16" fill="#707070"/></svg>
<svg style="left:628px;top:1041px;" width="30" height="24" viewBox="0 0 30 24"><path d="M1.6 4 V20 L13 12 Z M13 4 V20 L24.6 12 Z" fill="#707070"/><rect x="25" y="4" width="3.4" height="16" fill="#707070"/></svg>
<svg style="left:678px;top:1040px;" width="32" height="26" viewBox="0 0 32 26"><g fill="none" stroke="#707070" stroke-width="2"><path d="M7 3 H3 V23 H7 M25 3 H29 V23 H25"/></g><path d="M11 6.6 V19.4 L22 13 Z" fill="#707070"/></svg>
<div style="left:730px;top:1038px;width:198px;height:30px;background:#242424;border-radius:6px;border:1px solid #1b1b1b;border-top:2px solid #141414;"></div>
<span id="t93" style="left:736.6px;top:1041.68px;font-size:24px;line-height:24px;color:#6f6f6f;font-weight:400;letter-spacing:0.53px;">0</span>
<svg style="left:949px;top:1048px;" width="16" height="11" viewBox="0 0 16 11"><path d="M0.6 0.6 H14.8 L7.7 9.6 Z" fill="#b0b0b0"/></svg></div></body></html>
